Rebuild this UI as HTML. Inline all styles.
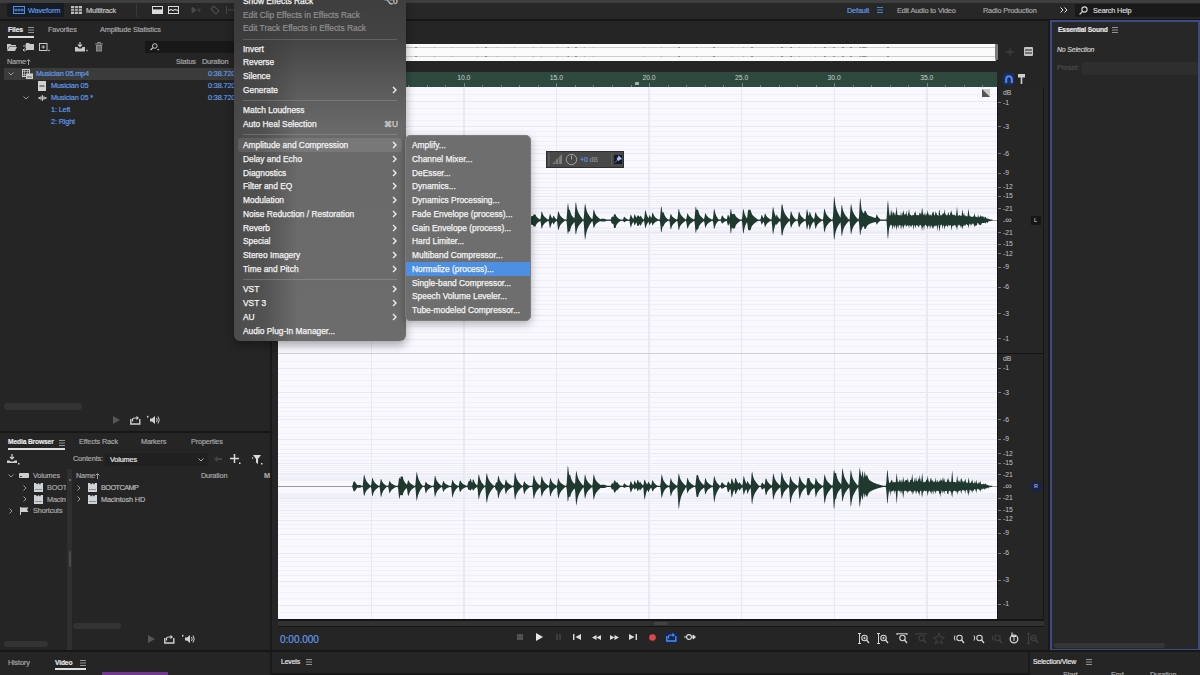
<!DOCTYPE html>
<html><head><meta charset="utf-8"><title>Adobe Audition</title>
<style>
*{box-sizing:border-box;margin:0;padding:0}
html,body{width:1200px;height:675px;overflow:hidden;background:#1a1a1a}
body{font-family:"Liberation Sans",sans-serif;font-size:7.3px;color:#a9a9a9;position:relative}
.a{position:absolute}
.t{position:absolute;white-space:nowrap;line-height:10px;height:10px;letter-spacing:-0.15px;-webkit-text-stroke-width:.18px}
.w{color:#e8e8e8}
.b{color:#629bea}
.d{color:#5a5a5a}
.panel{position:absolute;background:#252525}
svg{position:absolute;overflow:visible}
.mi{position:absolute;left:243px;white-space:nowrap;font-size:8.4px;line-height:12px;height:12px;color:#f4f4f4;-webkit-text-stroke:.25px #f4f4f4}
.mi.dis{color:#909090;-webkit-text-stroke:.2px #909090}
.sep{position:absolute;left:243px;width:154px;height:1px;background:rgba(255,255,255,.16)}
.si{position:absolute;left:412px;white-space:nowrap;font-size:8.4px;line-height:12px;height:12px;color:#f4f4f4;-webkit-text-stroke:.25px #f4f4f4}
.db{position:absolute;left:1003px;white-space:nowrap;font-size:6.8px;line-height:8px;height:8px;color:#c4c4c4}
.rl{position:absolute;white-space:nowrap;font-size:6.8px;line-height:8px;height:8px;color:#c9d2cd;width:30px;text-align:center;top:74.2px}
</style></head><body>

<!-- top app bar -->
<div class="a" style="left:0;top:0;width:1200px;height:20px;background:#272727"></div>
<div class="a" style="left:0;top:0;width:1200px;height:2.500px;background:#3e3e3e"></div>
<div class="a" style="left:0;top:19px;width:1200px;height:2px;background:#161616"></div>
<div class="panel" id="files" style="left:0;top:21px;width:270px;height:410px"></div>
<div class="panel" id="media" style="left:0;top:433px;width:270px;height:217px"></div>
<div class="panel" id="hist" style="left:0;top:652px;width:270px;height:23px"></div>
<div class="panel" id="editor" style="left:272px;top:21px;width:776px;height:629px"></div>
<div class="panel" id="levels" style="left:272px;top:652px;width:756px;height:23px"></div>
<div class="panel" id="ess" style="left:1050px;top:20px;width:150px;height:631px;border:2px solid #3f4a84;background:#272727"></div>
<div class="panel" id="selview" style="left:1030px;top:652px;width:170px;height:23px"></div>

<div class="a" style="left:7px;top:3px;width:57px;height:14px;background:#161b24;border-radius:2px"></div>
<svg style="left:13px;top:6px" width="12" height="8" viewBox="0 0 12 8"><rect x=".5" y=".5" width="11" height="7" fill="none" stroke="#4f8fe6"/><path d="M1 4h10M3 2.5v3M6 2.5v3M9 2.5v3" stroke="#4f8fe6" stroke-width="1"/></svg>
<div class="t b" style="left:28px;top:5.5px;font-size:7.4px">Waveform</div>
<svg style="left:71px;top:6px" width="11" height="8" viewBox="0 0 11 8"><rect x="0" y="0" width="11" height="8" fill="#bdbdbd"/><path d="M0 2.7h11M0 5.3h11M3.6 0v8M7.3 0v8" stroke="#222" stroke-width=".8"/></svg>
<div class="t" style="left:86px;top:5.5px;font-size:7.4px;color:#c6c6c6">Multitrack</div>
<div class="a" style="left:136px;top:4px;width:1px;height:13px;background:#3a3a3a"></div>
<svg style="left:152px;top:6px" width="11" height="8" viewBox="0 0 11 8"><rect width="11" height="8" fill="#dcdcdc"/><rect x="1" y="1" width="9" height="2.4" fill="#222"/></svg>
<svg style="left:168px;top:6px" width="11" height="8" viewBox="0 0 11 8"><rect x=".5" y=".5" width="10" height="7" fill="none" stroke="#dcdcdc"/><path d="M1 5l2-2 2 2 2-2 3 2" fill="none" stroke="#dcdcdc" stroke-width=".9"/><path d="M1 4h9" stroke="#dcdcdc" stroke-width=".6"/></svg>
<svg style="left:192px;top:6px" width="9" height="8" viewBox="0 0 9 8"><path d="M0 1l4 3-4 3zM5 4h4M7 2v4" fill="#4a4a4a" stroke="#4a4a4a" stroke-width=".8"/></svg>
<svg style="left:210px;top:5px" width="10" height="10" viewBox="0 0 10 10"><path d="M1 4l3-3 5 5-3 3z" fill="none" stroke="#4a4a4a" stroke-width="1.2"/></svg>
<svg style="left:226px;top:6px" width="8" height="8" viewBox="0 0 8 8"><path d="M.5 0v8M2 4h6" stroke="#4a4a4a" stroke-width="1"/></svg>

<div class="t b" style="left:847px;top:5.5px">Default</div>
<svg style="left:877px;top:7px" width="6" height="6" viewBox="0 0 6 6"><path d="M0 .5h6M0 3h6M0 5.5h6" stroke="#4f8fe6" stroke-width=".9"/></svg>
<div class="t" style="left:897px;top:5.5px">Edit Audio to Video</div>
<div class="t" style="left:983px;top:5.5px">Radio Production</div>
<svg style="left:1060px;top:7px" width="8" height="6" viewBox="0 0 8 6"><path d="M.5 .5l2.5 2.5-2.5 2.5M4.5 .5l2.500 2.500-2.500 2.500" fill="none" stroke="#e0e0e0" stroke-width="1"/></svg>
<div class="a" style="left:1075px;top:4px;width:125px;height:13px;background:#191919"></div>
<svg style="left:1079px;top:6px" width="9" height="9" viewBox="0 0 9 9"><circle cx="5.500" cy="3.500" r="2.600" fill="none" stroke="#d8d8d8" stroke-width="1.100"/><path d="M3.600 5.400L.6 8.400" stroke="#d8d8d8" stroke-width="1.300"/></svg>
<div class="t" style="left:1093px;top:6px;color:#dcdcdc">Search Help</div>

<div class="t w" style="left:8px;top:24.500px;font-weight:bold;font-size:6.9px">Files</div>
<svg style="left:28px;top:27px" width="6" height="6" viewBox="0 0 6 6"><path d="M0 .5h6M0 3h6M0 5.500h6" stroke="#a0a0a0" stroke-width=".9"/></svg>
<div class="a" style="left:8px;top:36px;width:26px;height:1.500px;background:#dedede"></div>
<div class="t" style="left:48px;top:24.500px">Favorites</div>
<div class="t" style="left:100px;top:24.500px">Amplitude Statistics</div>
<!-- toolbar icons -->
<svg style="left:7px;top:43px" width="10" height="8" viewBox="0 0 10 8"><path d="M0 1h3.500l1 1H9v1.500H2L0 7.500z" fill="#c8c8c8"/><path d="M2.300 4H10L8 8H0z" fill="#c8c8c8"/></svg>
<svg style="left:23px;top:42px" width="11" height="10" viewBox="0 0 11 10"><path d="M3 1h3l1 1h4v6H3z" fill="#c8c8c8"/><path d="M0 4h4M2.500 2.500L4 4 2.500 5.500M4 8H0M1.500 6.500L0 8l1.500 1.500" stroke="#c8c8c8" stroke-width=".9" fill="none"/></svg>
<svg style="left:39px;top:43px" width="11" height="9" viewBox="0 0 11 9"><rect x=".5" y=".5" width="7.500" height="7" fill="none" stroke="#c8c8c8" stroke-width="1"/><path d="M2.500 4h3.500M4.250 2.300v3.400" stroke="#c8c8c8" stroke-width=".9"/><rect x="9.300" y="6.800" width="1.400" height="1.400" fill="#c8c8c8"/></svg>
<svg style="left:75px;top:42px" width="13" height="10" viewBox="0 0 13 10"><path d="M0 5h2.500l1 1.500h3l1-1.500H10v4.500H0z" fill="#c8c8c8"/><path d="M5 0v4M3 2.500L5 4.600 7 2.500" stroke="#c8c8c8" stroke-width="1.200" fill="none"/><rect x="11.300" y="7.800" width="1.400" height="1.400" fill="#c8c8c8"/></svg>
<svg style="left:95px;top:42px" width="8" height="10" viewBox="0 0 8 10"><path d="M0 2h8M2.500 2V.5h3V2" stroke="#8a8a8a" stroke-width="1" fill="none"/><path d="M1 3h6v6.500H1z" fill="#8a8a8a"/><path d="M3 4v4.500M5 4v4.500" stroke="#232323" stroke-width=".6"/></svg>
<div class="a" style="left:145px;top:41px;width:89px;height:12px;background:#181818;border-radius:1px"></div>
<svg style="left:150px;top:43px" width="10" height="8" viewBox="0 0 10 8"><circle cx="4.800" cy="3" r="2.300" fill="none" stroke="#c8c8c8" stroke-width="1"/><path d="M3 4.600L.5 7" stroke="#c8c8c8" stroke-width="1.200"/><path d="M7 6h2.500L8.250 7.400z" fill="#c8c8c8"/></svg>
<!-- header -->
<div class="t" style="left:7px;top:57px">Name</div>
<svg style="left:26px;top:59px" width="5" height="6" viewBox="0 0 5 6"><path d="M2.500 6V1M.5 2.500L2.500 .5l2 2" stroke="#a9a9a9" stroke-width=".9" fill="none"/></svg>
<div class="t" style="left:176px;top:57px">Status</div>
<div class="t" style="left:202px;top:57px">Duration</div>
<!-- rows -->
<div class="a" style="left:4px;top:68px;width:230px;height:12px;background:#3b3b3b"></div>
<svg style="left:8px;top:72px" width="6" height="4" viewBox="0 0 6 4"><path d="M.5 .5L3 3 5.500 .5" stroke="#9a9a9a" stroke-width="1" fill="none"/></svg>
<svg style="left:22px;top:69px" width="11" height="10" viewBox="0 0 11 10"><rect x=".5" y=".5" width="7" height="7" fill="none" stroke="#cfcfcf" stroke-width="1"/><path d="M.5 2.500h7M.5 5.500h7M2.500 .5v7M5.500 .5v7" stroke="#cfcfcf" stroke-width=".6"/><rect x="4" y="4.500" width="7" height="5.500" fill="#cfcfcf"/><path d="M5 8h5" stroke="#3b3b3b" stroke-width=".7"/></svg>
<div class="t b" style="left:36px;top:69px">Musician 05.mp4</div>
<div class="t b" style="left:208px;top:69px">0:38.720</div>
<svg style="left:38px;top:81px" width="8" height="10" viewBox="0 0 8 10"><rect width="8" height="10" fill="#d2d2d2"/><path d="M1.500 5h5" stroke="#333" stroke-width="1"/></svg>
<div class="t b" style="left:51px;top:81px">Musician 05</div>
<div class="t b" style="left:208px;top:81px">0:38.720</div>
<svg style="left:23px;top:96px" width="6" height="4" viewBox="0 0 6 4"><path d="M.5 .5L3 3 5.500 .5" stroke="#9a9a9a" stroke-width="1" fill="none"/></svg>
<svg style="left:38px;top:95px" width="9" height="6" viewBox="0 0 9 6"><path d="M0 3h9M1.500 2v2M3 .8v4.400M4.500 0v6M6 1.200v3.600M7.500 2.200v1.600" stroke="#cfcfcf" stroke-width=".9"/></svg>
<div class="t b" style="left:51px;top:93px">Musician 05 *</div>
<div class="t b" style="left:208px;top:93px">0:38.720</div>
<div class="t b" style="left:51px;top:105px">1: Left</div>
<div class="t b" style="left:51px;top:117px">2: Right</div>
<!-- bottom scrollbar + transport -->
<div class="a" style="left:4px;top:403px;width:78px;height:7px;background:#333;border-radius:3px"></div>
<svg style="left:113px;top:416px" width="7" height="8" viewBox="0 0 7 8"><path d="M0 0l7 4-7 4z" fill="#555"/></svg>
<svg style="left:130px;top:415px" width="11" height="10" viewBox="0 0 11 10"><path d="M.8 4v5h9V4" stroke="#d0d0d0" stroke-width="1.400" fill="none"/><path d="M2.500 6.500V4.500Q2.500 3 4.500 3h3" stroke="#d0d0d0" stroke-width="1.200" fill="none"/><path d="M6.500 .8L9 3 6.500 5.200z" fill="#d0d0d0"/></svg>
<svg style="left:147px;top:415px" width="14" height="10" viewBox="0 0 14 10"><path d="M3 3.500h2L8 1v8L5 6.500H3z" fill="#d0d0d0"/><path d="M9.500 3q1.500 2 0 4M11 1.500q2.500 3.500 0 7" stroke="#d0d0d0" stroke-width="1" fill="none"/><path d="M0 .5l2 1.200-2 1.200z" fill="#d0d0d0"/></svg>

<div class="a" style="left:0;top:431px;width:270px;height:2px;background:#171717"></div>
<div class="t w" style="left:8px;top:437px;font-weight:bold;font-size:6.700px">Media Browser</div>
<svg style="left:59px;top:439.500px" width="6" height="6" viewBox="0 0 6 6"><path d="M0 .5h6M0 3h6M0 5.500h6" stroke="#a0a0a0" stroke-width=".9"/></svg>
<div class="a" style="left:8px;top:448px;width:57px;height:1.500px;background:#dedede"></div>
<div class="t" style="left:79px;top:437px">Effects Rack</div>
<div class="t" style="left:141px;top:437px">Markers</div>
<div class="t" style="left:191px;top:437px">Properties</div>
<svg style="left:7px;top:454px" width="13" height="11" viewBox="0 0 13 11"><path d="M5 0v4.500M3 3l2 2 2-2" stroke="#d0d0d0" stroke-width="1.200" fill="none"/><path d="M0 6.500h2.500l1 1h3l1-1H10V9H0z" fill="#d0d0d0"/><rect x="11" y="9" width="1.500" height="1.500" fill="#d0d0d0"/></svg>
<div class="t" style="left:73px;top:454px">Contents:</div>
<div class="a" style="left:105px;top:453px;width:103px;height:13px;background:#202020;border-radius:1px"></div>
<div class="t w" style="left:110px;top:454.500px">Volumes</div>
<svg style="left:198px;top:457.500px" width="6" height="4" viewBox="0 0 6 4"><path d="M.5 .5L3 3 5.500 .5" stroke="#b0b0b0" stroke-width="1" fill="none"/></svg>
<svg style="left:214px;top:456px" width="8" height="6" viewBox="0 0 8 6"><path d="M0 3l3.500-3v2H8v2H3.500v2z" fill="#444"/></svg>
<svg style="left:230px;top:454px" width="11" height="11" viewBox="0 0 11 11"><path d="M0 4.500h9M4.500 0v9" stroke="#dcdcdc" stroke-width="1.500"/><rect x="9" y="8.500" width="1.500" height="1.500" fill="#dcdcdc"/></svg>
<svg style="left:252px;top:455px" width="11" height="10" viewBox="0 0 11 10"><path d="M1 0h8L6 4v5L4 7.500V4z" fill="#dcdcdc"/><rect x="9" y="8" width="1.500" height="1.500" fill="#dcdcdc"/><path d="M0 2l1.500 1L0 4z" fill="#dcdcdc"/></svg>
<!-- tree -->
<svg style="left:8px;top:473.500px" width="6" height="4" viewBox="0 0 6 4"><path d="M.5 .5L3 3 5.500 .5" stroke="#9a9a9a" stroke-width="1" fill="none"/></svg>
<svg style="left:19px;top:473px" width="10" height="5" viewBox="0 0 10 5"><rect width="10" height="5" rx="1" fill="#cfcfcf"/><rect x="1" y="3" width="2" height="1" fill="#444"/></svg>
<div class="t" style="left:33px;top:471px">Volumes</div>
<svg style="left:23px;top:484.5px" width="4" height="6" viewBox="0 0 4 6"><path d="M.5 .5L3 3 .5 5.500" stroke="#9a9a9a" stroke-width="1" fill="none"/></svg><svg style="left:34px;top:483px" width="9" height="9" viewBox="0 0 9 9"><path d="M0 0h2l1 1.500L4.500 0 6 1.500 7 0h2v9H0z" fill="#cfd3d6"/><path d="M1 6.500h7" stroke="#8a9096" stroke-width="1"/></svg><div class="a" style="left:47px;top:483px;width:19px;height:10px;overflow:hidden"><div class="t" style="left:0;top:0">BOOTCAMP</div></div>
<svg style="left:23px;top:496px" width="4" height="6" viewBox="0 0 4 6"><path d="M.5 .5L3 3 .5 5.500" stroke="#9a9a9a" stroke-width="1" fill="none"/></svg><svg style="left:34px;top:494.5px" width="9" height="9" viewBox="0 0 9 9"><path d="M0 0h2l1 1.500L4.500 0 6 1.500 7 0h2v9H0z" fill="#cfd3d6"/><path d="M1 6.500h7" stroke="#8a9096" stroke-width="1"/></svg><div class="a" style="left:47px;top:494.500px;width:19px;height:10px;overflow:hidden"><div class="t" style="left:0;top:0">Macintosh HD</div></div>
<svg style="left:9px;top:508px" width="4" height="6" viewBox="0 0 4 6"><path d="M.5 .5L3 3 .5 5.500" stroke="#9a9a9a" stroke-width="1" fill="none"/></svg><svg style="left:20px;top:507px" width="9" height="8" viewBox="0 0 9 8"><path d="M.5 0v8" stroke="#cfcfcf" stroke-width="1"/><path d="M1 .5h7.500L7 2.800l1.500 2.300H1z" fill="#cfcfcf"/></svg><div class="t" style="left:33px;top:506px">Shortcuts</div>

<div class="a" style="left:67px;top:469px;width:5px;height:181px;background:#2f2f2f"></div>
<div class="a" style="left:68.500px;top:479px;width:2px;height:2px;background:#666"></div><div class="a" style="left:68.500px;top:551px;width:2px;height:16px;background:#4a4a4a;border-radius:1px"></div>
<div class="t" style="left:76px;top:470.500px">Name</div>
<svg style="left:95px;top:472.500px" width="5" height="6" viewBox="0 0 5 6"><path d="M2.500 6V1M.5 2.500L2.500 .5l2 2" stroke="#a9a9a9" stroke-width=".9" fill="none"/></svg>
<div class="t" style="left:201px;top:470.500px">Duration</div>
<div class="t" style="left:264px;top:470.500px;font-weight:bold">M</div>
<svg style="left:77px;top:484.5px" width="4" height="6" viewBox="0 0 4 6"><path d="M.5 .5L3 3 .5 5.500" stroke="#9a9a9a" stroke-width="1" fill="none"/></svg><svg style="left:88px;top:483px" width="9" height="9" viewBox="0 0 9 9"><path d="M0 0h2l1 1.500L4.500 0 6 1.500 7 0h2v9H0z" fill="#cfd3d6"/><path d="M1 6.500h7" stroke="#8a9096" stroke-width="1"/></svg><div class="t" style="left:101px;top:483px;color:#b9b9b9;letter-spacing:-.55px">BOOTCAMP</div>
<svg style="left:77px;top:496px" width="4" height="6" viewBox="0 0 4 6"><path d="M.5 .5L3 3 .5 5.500" stroke="#9a9a9a" stroke-width="1" fill="none"/></svg><svg style="left:88px;top:494.5px" width="9" height="9" viewBox="0 0 9 9"><path d="M0 0h2l1 1.500L4.500 0 6 1.500 7 0h2v9H0z" fill="#cfd3d6"/><path d="M1 6.500h7" stroke="#8a9096" stroke-width="1"/></svg><div class="t" style="left:101px;top:494.500px;color:#b9b9b9">Macintosh HD</div>

<div class="a" style="left:73px;top:623px;width:48px;height:6px;background:#333;border-radius:3px"></div>
<div class="a" style="left:4px;top:641px;width:44px;height:6px;background:#333;border-radius:3px"></div>
<svg style="left:148px;top:635px" width="7" height="8" viewBox="0 0 7 8"><path d="M0 0l7 4-7 4z" fill="#555"/></svg>
<svg style="left:164px;top:634px" width="11" height="10" viewBox="0 0 11 10"><path d="M.8 4v5h9V4" stroke="#d0d0d0" stroke-width="1.400" fill="none"/><path d="M2.500 6.500V4.500Q2.500 3 4.500 3h3" stroke="#d0d0d0" stroke-width="1.200" fill="none"/><path d="M6.500 .8L9 3 6.500 5.200z" fill="#d0d0d0"/></svg>
<svg style="left:182px;top:634px" width="14" height="10" viewBox="0 0 14 10"><path d="M3 3.500h2L8 1v8L5 6.500H3z" fill="#d0d0d0"/><path d="M9.500 3q1.500 2 0 4M11 1.500q2.500 3.500 0 7" stroke="#d0d0d0" stroke-width="1" fill="none"/><path d="M0 .5l2 1.200-2 1.200z" fill="#d0d0d0"/></svg>
<!-- history/video -->
<div class="a" style="left:0;top:650px;width:1200px;height:2px;background:#171717"></div>
<div class="t" style="left:8px;top:657.500px">History</div>
<div class="t w" style="left:55px;top:657.500px;font-weight:bold;font-size:6.700px">Video</div>
<svg style="left:80px;top:660px" width="6" height="6" viewBox="0 0 6 6"><path d="M0 .5h6M0 3h6M0 5.500h6" stroke="#a0a0a0" stroke-width=".9"/></svg>
<div class="a" style="left:55px;top:668px;width:31px;height:1.500px;background:#dedede"></div>
<div class="a" style="left:102px;top:672px;width:66px;height:3px;background:#70398f"></div>
<div class="t w" style="left:281px;top:656.500px;font-size:6.900px">Levels</div>
<svg style="left:306px;top:659px" width="6" height="6" viewBox="0 0 6 6"><path d="M0 .5h6M0 3h6M0 5.500h6" stroke="#a0a0a0" stroke-width=".9"/></svg>
<div class="a" style="left:272px;top:673px;width:756px;height:2px;background:#171717"></div>
<div class="t w" style="left:1033px;top:656.500px;font-size:6.900px">Selection/View</div>
<div class="t" style="left:1063px;top:669.500px">Start</div><div class="t" style="left:1111px;top:669.500px">End</div><div class="t" style="left:1150px;top:669.500px">Duration</div>
<svg style="left:1086px;top:659px" width="6" height="6" viewBox="0 0 6 6"><path d="M0 .5h6M0 3h6M0 5.500h6" stroke="#a0a0a0" stroke-width=".9"/></svg>

<div class="t w" style="left:1058px;top:24.500px;font-weight:bold;font-size:6.700px">Essential Sound</div>
<svg style="left:1112px;top:27px" width="6" height="6" viewBox="0 0 6 6"><path d="M0 .5h6M0 3h6M0 5.500h6" stroke="#a0a0a0" stroke-width=".9"/></svg>
<div class="t" style="left:1057px;top:44.500px;font-style:italic;color:#cfcfcf;font-size:6.900px">No Selection</div>
<div class="t d" style="left:1057px;top:63px;color:#4c4c4c">Preset:</div>
<div class="a" style="left:1082px;top:62px;width:116px;height:13px;background:#2e2e2e;border-radius:2px"></div>
<div class="a" style="left:1054px;top:642.500px;width:111px;height:5.500px;background:#363636;border-radius:3px"></div>

<div class="a" style="left:396px;top:43.500px;width:600px;height:17px;background:#fbfbfb;border-radius:1px"></div>
<div class="a" style="left:396px;top:47px;width:600px;height:1px;background:#cdcdcd"></div>
<div class="a" style="left:396px;top:56px;width:600px;height:1px;background:#cdcdcd"></div>
<div class="a" style="left:415.3px;top:47px;width:2px;height:1px;background:#8c8c8c"></div>
<div class="a" style="left:433.6px;top:47px;width:1px;height:1px;background:#a8a8a8"></div>
<div class="a" style="left:451.1px;top:47px;width:1px;height:1px;background:#a8a8a8"></div>
<div class="a" style="left:477.4px;top:47px;width:1px;height:1px;background:#a8a8a8"></div>
<div class="a" style="left:485.4px;top:47px;width:2px;height:1px;background:#8c8c8c"></div>
<div class="a" style="left:497.0px;top:47px;width:1px;height:1px;background:#a8a8a8"></div>
<div class="a" style="left:513.7px;top:47px;width:1px;height:1px;background:#a8a8a8"></div>
<div class="a" style="left:532.5px;top:47px;width:1px;height:1px;background:#a8a8a8"></div>
<div class="a" style="left:540.5px;top:47px;width:1px;height:1px;background:#a8a8a8"></div>
<div class="a" style="left:557.1px;top:47px;width:1px;height:1px;background:#a8a8a8"></div>
<div class="a" style="left:566.7px;top:47px;width:2px;height:1px;background:#8c8c8c"></div>
<div class="a" style="left:567.1px;top:47px;width:1px;height:1px;background:#a8a8a8"></div>
<div class="a" style="left:575.1px;top:47px;width:2px;height:1px;background:#8c8c8c"></div>
<div class="a" style="left:583.8px;top:47px;width:1px;height:1px;background:#a8a8a8"></div>
<div class="a" style="left:592.6px;top:47px;width:1px;height:1px;background:#a8a8a8"></div>
<div class="a" style="left:643.5px;top:47px;width:1px;height:1px;background:#a8a8a8"></div>
<div class="a" style="left:660.6px;top:47px;width:1px;height:1px;background:#a8a8a8"></div>
<div class="a" style="left:677.7px;top:47px;width:2px;height:1px;background:#8c8c8c"></div>
<div class="a" style="left:695.7px;top:47px;width:1px;height:1px;background:#a8a8a8"></div>
<div class="a" style="left:713.2px;top:47px;width:2px;height:1px;background:#8c8c8c"></div>
<div class="a" style="left:730.7px;top:47px;width:1px;height:1px;background:#a8a8a8"></div>
<div class="a" style="left:742.8px;top:47px;width:1px;height:1px;background:#a8a8a8"></div>
<div class="a" style="left:751.1px;top:47px;width:2px;height:1px;background:#8c8c8c"></div>
<div class="a" style="left:772.4px;top:47px;width:1px;height:1px;background:#a8a8a8"></div>
<div class="a" style="left:780.8px;top:47px;width:2px;height:1px;background:#8c8c8c"></div>
<div class="a" style="left:789.5px;top:47px;width:2px;height:1px;background:#8c8c8c"></div>
<div class="a" style="left:798.7px;top:47px;width:1px;height:1px;background:#a8a8a8"></div>
<div class="a" style="left:814.9px;top:47px;width:1px;height:1px;background:#a8a8a8"></div>
<div class="a" style="left:823.8px;top:47px;width:2px;height:1px;background:#8c8c8c"></div>
<div class="a" style="left:833.2px;top:47px;width:2px;height:1px;background:#8c8c8c"></div>
<div class="a" style="left:833.5px;top:47px;width:1px;height:1px;background:#a8a8a8"></div>
<div class="a" style="left:841.7px;top:47px;width:2px;height:1px;background:#8c8c8c"></div>
<div class="a" style="left:850.0px;top:47px;width:2px;height:1px;background:#8c8c8c"></div>
<div class="a" style="left:858.9px;top:47px;width:2px;height:1px;background:#8c8c8c"></div>
<div class="a" style="left:859.1px;top:47px;width:1px;height:1px;background:#a8a8a8"></div>
<div class="a" style="left:861.7px;top:47px;width:2px;height:1px;background:#8c8c8c"></div>
<div class="a" style="left:863.9px;top:47px;width:2px;height:1px;background:#8c8c8c"></div>
<div class="a" style="left:865.7px;top:47px;width:1px;height:1px;background:#a8a8a8"></div>
<div class="a" style="left:886.6px;top:47px;width:2px;height:1px;background:#8c8c8c"></div>
<div class="a" style="left:415.3px;top:56px;width:2px;height:1px;background:#8c8c8c"></div>
<div class="a" style="left:433.6px;top:56px;width:1px;height:1px;background:#a8a8a8"></div>
<div class="a" style="left:451.1px;top:56px;width:1px;height:1px;background:#a8a8a8"></div>
<div class="a" style="left:477.4px;top:56px;width:1px;height:1px;background:#a8a8a8"></div>
<div class="a" style="left:485.4px;top:56px;width:2px;height:1px;background:#8c8c8c"></div>
<div class="a" style="left:497.0px;top:56px;width:1px;height:1px;background:#a8a8a8"></div>
<div class="a" style="left:513.7px;top:56px;width:1px;height:1px;background:#a8a8a8"></div>
<div class="a" style="left:532.5px;top:56px;width:1px;height:1px;background:#a8a8a8"></div>
<div class="a" style="left:540.5px;top:56px;width:1px;height:1px;background:#a8a8a8"></div>
<div class="a" style="left:557.1px;top:56px;width:1px;height:1px;background:#a8a8a8"></div>
<div class="a" style="left:566.7px;top:56px;width:2px;height:1px;background:#8c8c8c"></div>
<div class="a" style="left:567.1px;top:56px;width:1px;height:1px;background:#a8a8a8"></div>
<div class="a" style="left:575.1px;top:56px;width:2px;height:1px;background:#8c8c8c"></div>
<div class="a" style="left:583.8px;top:56px;width:1px;height:1px;background:#a8a8a8"></div>
<div class="a" style="left:592.6px;top:56px;width:1px;height:1px;background:#a8a8a8"></div>
<div class="a" style="left:643.5px;top:56px;width:1px;height:1px;background:#a8a8a8"></div>
<div class="a" style="left:660.6px;top:56px;width:1px;height:1px;background:#a8a8a8"></div>
<div class="a" style="left:677.7px;top:56px;width:2px;height:1px;background:#8c8c8c"></div>
<div class="a" style="left:695.7px;top:56px;width:1px;height:1px;background:#a8a8a8"></div>
<div class="a" style="left:713.2px;top:56px;width:2px;height:1px;background:#8c8c8c"></div>
<div class="a" style="left:730.7px;top:56px;width:1px;height:1px;background:#a8a8a8"></div>
<div class="a" style="left:742.8px;top:56px;width:1px;height:1px;background:#a8a8a8"></div>
<div class="a" style="left:751.1px;top:56px;width:2px;height:1px;background:#8c8c8c"></div>
<div class="a" style="left:772.4px;top:56px;width:1px;height:1px;background:#a8a8a8"></div>
<div class="a" style="left:780.8px;top:56px;width:2px;height:1px;background:#8c8c8c"></div>
<div class="a" style="left:789.5px;top:56px;width:2px;height:1px;background:#8c8c8c"></div>
<div class="a" style="left:798.7px;top:56px;width:1px;height:1px;background:#a8a8a8"></div>
<div class="a" style="left:814.9px;top:56px;width:1px;height:1px;background:#a8a8a8"></div>
<div class="a" style="left:823.8px;top:56px;width:2px;height:1px;background:#8c8c8c"></div>
<div class="a" style="left:833.2px;top:56px;width:2px;height:1px;background:#8c8c8c"></div>
<div class="a" style="left:833.5px;top:56px;width:1px;height:1px;background:#a8a8a8"></div>
<div class="a" style="left:841.7px;top:56px;width:2px;height:1px;background:#8c8c8c"></div>
<div class="a" style="left:850.0px;top:56px;width:2px;height:1px;background:#8c8c8c"></div>
<div class="a" style="left:858.9px;top:56px;width:2px;height:1px;background:#8c8c8c"></div>
<div class="a" style="left:859.1px;top:56px;width:1px;height:1px;background:#a8a8a8"></div>
<div class="a" style="left:861.7px;top:56px;width:2px;height:1px;background:#8c8c8c"></div>
<div class="a" style="left:863.9px;top:56px;width:2px;height:1px;background:#8c8c8c"></div>
<div class="a" style="left:865.7px;top:56px;width:1px;height:1px;background:#a8a8a8"></div>
<div class="a" style="left:886.6px;top:56px;width:2px;height:1px;background:#8c8c8c"></div>
<div class="a" style="left:995px;top:44px;width:3px;height:16px;background:#7a7a7a;border-radius:1px"></div>
<svg style="left:1004px;top:46px" width="12" height="12" viewBox="0 0 12 12"><path d="M6 0l1 4.500L11.500 6 7 7.200 6 12 5 7.200.5 6 5 4.500z" fill="#3a3a3a"/></svg>
<svg style="left:1024px;top:47px" width="9" height="9" viewBox="0 0 9 9"><rect width="9" height="9" rx="1" fill="#c4c4c4"/><path d="M1 3h7M1 6h7" stroke="#232323" stroke-width="1"/></svg>
<!-- ruler -->
<div class="a" style="left:278px;top:72px;width:719px;height:15px;background:#2e4a3e"></div>
<div class="a" style="left:278.6px;top:83.0px;width:1px;height:4.0px;background:#6f8a7d"></div>
<div class="a" style="left:297.1px;top:84.5px;width:1px;height:2.5px;background:#6f8a7d"></div>
<div class="a" style="left:315.6px;top:84.5px;width:1px;height:2.5px;background:#6f8a7d"></div>
<div class="a" style="left:334.2px;top:84.5px;width:1px;height:2.5px;background:#6f8a7d"></div>
<div class="a" style="left:352.7px;top:84.5px;width:1px;height:2.5px;background:#6f8a7d"></div>
<div class="a" style="left:371.2px;top:83.0px;width:1px;height:4.0px;background:#6f8a7d"></div>
<div class="a" style="left:389.7px;top:84.5px;width:1px;height:2.5px;background:#6f8a7d"></div>
<div class="a" style="left:408.2px;top:84.5px;width:1px;height:2.5px;background:#6f8a7d"></div>
<div class="a" style="left:426.8px;top:84.5px;width:1px;height:2.5px;background:#6f8a7d"></div>
<div class="a" style="left:445.3px;top:84.5px;width:1px;height:2.5px;background:#6f8a7d"></div>
<div class="a" style="left:463.8px;top:83.0px;width:1px;height:4.0px;background:#6f8a7d"></div>
<div class="a" style="left:482.3px;top:84.5px;width:1px;height:2.5px;background:#6f8a7d"></div>
<div class="a" style="left:500.8px;top:84.5px;width:1px;height:2.5px;background:#6f8a7d"></div>
<div class="a" style="left:519.4px;top:84.5px;width:1px;height:2.5px;background:#6f8a7d"></div>
<div class="a" style="left:537.9px;top:84.5px;width:1px;height:2.5px;background:#6f8a7d"></div>
<div class="a" style="left:556.4px;top:83.0px;width:1px;height:4.0px;background:#6f8a7d"></div>
<div class="a" style="left:574.9px;top:84.5px;width:1px;height:2.5px;background:#6f8a7d"></div>
<div class="a" style="left:593.4px;top:84.5px;width:1px;height:2.5px;background:#6f8a7d"></div>
<div class="a" style="left:612.0px;top:84.5px;width:1px;height:2.5px;background:#6f8a7d"></div>
<div class="a" style="left:630.5px;top:84.5px;width:1px;height:2.5px;background:#6f8a7d"></div>
<div class="a" style="left:649.0px;top:83.0px;width:1px;height:4.0px;background:#6f8a7d"></div>
<div class="a" style="left:667.5px;top:84.5px;width:1px;height:2.5px;background:#6f8a7d"></div>
<div class="a" style="left:686.0px;top:84.5px;width:1px;height:2.5px;background:#6f8a7d"></div>
<div class="a" style="left:704.6px;top:84.5px;width:1px;height:2.5px;background:#6f8a7d"></div>
<div class="a" style="left:723.1px;top:84.5px;width:1px;height:2.5px;background:#6f8a7d"></div>
<div class="a" style="left:741.6px;top:83.0px;width:1px;height:4.0px;background:#6f8a7d"></div>
<div class="a" style="left:760.1px;top:84.5px;width:1px;height:2.5px;background:#6f8a7d"></div>
<div class="a" style="left:778.6px;top:84.5px;width:1px;height:2.5px;background:#6f8a7d"></div>
<div class="a" style="left:797.2px;top:84.5px;width:1px;height:2.5px;background:#6f8a7d"></div>
<div class="a" style="left:815.7px;top:84.5px;width:1px;height:2.5px;background:#6f8a7d"></div>
<div class="a" style="left:834.2px;top:83.0px;width:1px;height:4.0px;background:#6f8a7d"></div>
<div class="a" style="left:852.7px;top:84.5px;width:1px;height:2.5px;background:#6f8a7d"></div>
<div class="a" style="left:871.2px;top:84.5px;width:1px;height:2.5px;background:#6f8a7d"></div>
<div class="a" style="left:889.8px;top:84.5px;width:1px;height:2.5px;background:#6f8a7d"></div>
<div class="a" style="left:908.3px;top:84.5px;width:1px;height:2.5px;background:#6f8a7d"></div>
<div class="a" style="left:926.8px;top:83.0px;width:1px;height:4.0px;background:#6f8a7d"></div>
<div class="a" style="left:945.3px;top:84.5px;width:1px;height:2.5px;background:#6f8a7d"></div>
<div class="a" style="left:963.8px;top:84.5px;width:1px;height:2.5px;background:#6f8a7d"></div>
<div class="a" style="left:982.4px;top:84.5px;width:1px;height:2.5px;background:#6f8a7d"></div>
<div class="rl" style="left:356.2px">5.0</div><div class="rl" style="left:448.8px">10.0</div><div class="rl" style="left:541.4px">15.0</div><div class="rl" style="left:634.0px">20.0</div><div class="rl" style="left:726.6px">25.0</div><div class="rl" style="left:819.2px">30.0</div><div class="rl" style="left:911.8px">35.0</div>

<div class="a" style="left:1003px;top:73px;width:11px;height:12px;background:#1c2c5e;border-radius:2px"></div>
<svg style="left:1004.500px;top:75px" width="8" height="8" viewBox="0 0 8 8"><path d="M1.200 8V4a2.800 2.800 0 0 1 5.600 0v4" fill="none" stroke="#4d8df0" stroke-width="2"/></svg>
<svg style="left:1018px;top:74px" width="7" height="10" viewBox="0 0 7 10"><path d="M0 0h7v3.500H0z" fill="#d0d0d0"/><path d="M3.500 3v7" stroke="#d0d0d0" stroke-width="1.600"/></svg>
<div class="a" style="left:635px;top:82px;width:4px;height:3px;background:#9fb0a8"></div>
<!-- wave area -->
<div class="a" id="wave" style="left:278px;top:87px;width:719px;height:533px;background:#f8f8fe"></div>
<div class="a" style="left:278px;top:94.0px;width:719px;height:1px;background:#f0f0f9"></div>
<div class="a" style="left:278px;top:346.0px;width:719px;height:1px;background:#f0f0f9"></div>
<div class="a" style="left:278px;top:101.0px;width:719px;height:1px;background:#e9e9f4"></div>
<div class="a" style="left:278px;top:339.0px;width:719px;height:1px;background:#e9e9f4"></div>
<div class="a" style="left:278px;top:107.7px;width:719px;height:1px;background:#f0f0f9"></div>
<div class="a" style="left:278px;top:332.3px;width:719px;height:1px;background:#f0f0f9"></div>
<div class="a" style="left:278px;top:114.0px;width:719px;height:1px;background:#f0f0f9"></div>
<div class="a" style="left:278px;top:326.0px;width:719px;height:1px;background:#f0f0f9"></div>
<div class="a" style="left:278px;top:119.9px;width:719px;height:1px;background:#f0f0f9"></div>
<div class="a" style="left:278px;top:320.1px;width:719px;height:1px;background:#f0f0f9"></div>
<div class="a" style="left:278px;top:125.5px;width:719px;height:1px;background:#e9e9f4"></div>
<div class="a" style="left:278px;top:314.5px;width:719px;height:1px;background:#e9e9f4"></div>
<div class="a" style="left:278px;top:130.8px;width:719px;height:1px;background:#f0f0f9"></div>
<div class="a" style="left:278px;top:309.2px;width:719px;height:1px;background:#f0f0f9"></div>
<div class="a" style="left:278px;top:135.8px;width:719px;height:1px;background:#f0f0f9"></div>
<div class="a" style="left:278px;top:304.2px;width:719px;height:1px;background:#f0f0f9"></div>
<div class="a" style="left:278px;top:140.5px;width:719px;height:1px;background:#f0f0f9"></div>
<div class="a" style="left:278px;top:299.5px;width:719px;height:1px;background:#f0f0f9"></div>
<div class="a" style="left:278px;top:144.9px;width:719px;height:1px;background:#f0f0f9"></div>
<div class="a" style="left:278px;top:295.1px;width:719px;height:1px;background:#f0f0f9"></div>
<div class="a" style="left:278px;top:149.1px;width:719px;height:1px;background:#f0f0f9"></div>
<div class="a" style="left:278px;top:290.9px;width:719px;height:1px;background:#f0f0f9"></div>
<div class="a" style="left:278px;top:153.1px;width:719px;height:1px;background:#e9e9f4"></div>
<div class="a" style="left:278px;top:286.9px;width:719px;height:1px;background:#e9e9f4"></div>
<div class="a" style="left:278px;top:160.4px;width:719px;height:1px;background:#f0f0f9"></div>
<div class="a" style="left:278px;top:279.6px;width:719px;height:1px;background:#f0f0f9"></div>
<div class="a" style="left:278px;top:166.9px;width:719px;height:1px;background:#f0f0f9"></div>
<div class="a" style="left:278px;top:273.1px;width:719px;height:1px;background:#f0f0f9"></div>
<div class="a" style="left:278px;top:172.6px;width:719px;height:1px;background:#e9e9f4"></div>
<div class="a" style="left:278px;top:267.4px;width:719px;height:1px;background:#e9e9f4"></div>
<div class="a" style="left:278px;top:177.8px;width:719px;height:1px;background:#f0f0f9"></div>
<div class="a" style="left:278px;top:262.2px;width:719px;height:1px;background:#f0f0f9"></div>
<div class="a" style="left:278px;top:182.4px;width:719px;height:1px;background:#f0f0f9"></div>
<div class="a" style="left:278px;top:257.6px;width:719px;height:1px;background:#f0f0f9"></div>
<div class="a" style="left:278px;top:186.5px;width:719px;height:1px;background:#e9e9f4"></div>
<div class="a" style="left:278px;top:253.5px;width:719px;height:1px;background:#e9e9f4"></div>
<div class="a" style="left:278px;top:190.1px;width:719px;height:1px;background:#f0f0f9"></div>
<div class="a" style="left:278px;top:249.9px;width:719px;height:1px;background:#f0f0f9"></div>
<div class="a" style="left:278px;top:193.4px;width:719px;height:1px;background:#f0f0f9"></div>
<div class="a" style="left:278px;top:246.6px;width:719px;height:1px;background:#f0f0f9"></div>
<div class="a" style="left:278px;top:196.3px;width:719px;height:1px;background:#e9e9f4"></div>
<div class="a" style="left:278px;top:243.7px;width:719px;height:1px;background:#e9e9f4"></div>
<div class="a" style="left:278px;top:198.8px;width:719px;height:1px;background:#f0f0f9"></div>
<div class="a" style="left:278px;top:241.2px;width:719px;height:1px;background:#f0f0f9"></div>
<div class="a" style="left:278px;top:201.1px;width:719px;height:1px;background:#f0f0f9"></div>
<div class="a" style="left:278px;top:238.9px;width:719px;height:1px;background:#f0f0f9"></div>
<div class="a" style="left:278px;top:203.2px;width:719px;height:1px;background:#f0f0f9"></div>
<div class="a" style="left:278px;top:236.8px;width:719px;height:1px;background:#f0f0f9"></div>
<div class="a" style="left:278px;top:205.0px;width:719px;height:1px;background:#f0f0f9"></div>
<div class="a" style="left:278px;top:235.0px;width:719px;height:1px;background:#f0f0f9"></div>
<div class="a" style="left:278px;top:206.7px;width:719px;height:1px;background:#f0f0f9"></div>
<div class="a" style="left:278px;top:233.3px;width:719px;height:1px;background:#f0f0f9"></div>
<div class="a" style="left:278px;top:208.1px;width:719px;height:1px;background:#e9e9f4"></div>
<div class="a" style="left:278px;top:231.9px;width:719px;height:1px;background:#e9e9f4"></div>
<div class="a" style="left:278px;top:209.4px;width:719px;height:1px;background:#f0f0f9"></div>
<div class="a" style="left:278px;top:230.6px;width:719px;height:1px;background:#f0f0f9"></div>
<div class="a" style="left:278px;top:210.5px;width:719px;height:1px;background:#f0f0f9"></div>
<div class="a" style="left:278px;top:229.5px;width:719px;height:1px;background:#f0f0f9"></div>
<div class="a" style="left:278px;top:211.6px;width:719px;height:1px;background:#f0f0f9"></div>
<div class="a" style="left:278px;top:228.4px;width:719px;height:1px;background:#f0f0f9"></div>
<div class="a" style="left:278px;top:212.5px;width:719px;height:1px;background:#f0f0f9"></div>
<div class="a" style="left:278px;top:227.5px;width:719px;height:1px;background:#f0f0f9"></div>
<div class="a" style="left:278px;top:213.3px;width:719px;height:1px;background:#f0f0f9"></div>
<div class="a" style="left:278px;top:226.7px;width:719px;height:1px;background:#f0f0f9"></div>
<div class="a" style="left:278px;top:360.5px;width:719px;height:1px;background:#f0f0f9"></div>
<div class="a" style="left:278px;top:611.9px;width:719px;height:1px;background:#f0f0f9"></div>
<div class="a" style="left:278px;top:367.5px;width:719px;height:1px;background:#e9e9f4"></div>
<div class="a" style="left:278px;top:604.9px;width:719px;height:1px;background:#e9e9f4"></div>
<div class="a" style="left:278px;top:374.1px;width:719px;height:1px;background:#f0f0f9"></div>
<div class="a" style="left:278px;top:598.3px;width:719px;height:1px;background:#f0f0f9"></div>
<div class="a" style="left:278px;top:380.4px;width:719px;height:1px;background:#f0f0f9"></div>
<div class="a" style="left:278px;top:592.0px;width:719px;height:1px;background:#f0f0f9"></div>
<div class="a" style="left:278px;top:386.3px;width:719px;height:1px;background:#f0f0f9"></div>
<div class="a" style="left:278px;top:586.1px;width:719px;height:1px;background:#f0f0f9"></div>
<div class="a" style="left:278px;top:391.9px;width:719px;height:1px;background:#e9e9f4"></div>
<div class="a" style="left:278px;top:580.5px;width:719px;height:1px;background:#e9e9f4"></div>
<div class="a" style="left:278px;top:397.2px;width:719px;height:1px;background:#f0f0f9"></div>
<div class="a" style="left:278px;top:575.2px;width:719px;height:1px;background:#f0f0f9"></div>
<div class="a" style="left:278px;top:402.2px;width:719px;height:1px;background:#f0f0f9"></div>
<div class="a" style="left:278px;top:570.2px;width:719px;height:1px;background:#f0f0f9"></div>
<div class="a" style="left:278px;top:406.9px;width:719px;height:1px;background:#f0f0f9"></div>
<div class="a" style="left:278px;top:565.5px;width:719px;height:1px;background:#f0f0f9"></div>
<div class="a" style="left:278px;top:411.3px;width:719px;height:1px;background:#f0f0f9"></div>
<div class="a" style="left:278px;top:561.1px;width:719px;height:1px;background:#f0f0f9"></div>
<div class="a" style="left:278px;top:415.5px;width:719px;height:1px;background:#f0f0f9"></div>
<div class="a" style="left:278px;top:556.9px;width:719px;height:1px;background:#f0f0f9"></div>
<div class="a" style="left:278px;top:419.4px;width:719px;height:1px;background:#e9e9f4"></div>
<div class="a" style="left:278px;top:553.0px;width:719px;height:1px;background:#e9e9f4"></div>
<div class="a" style="left:278px;top:426.7px;width:719px;height:1px;background:#f0f0f9"></div>
<div class="a" style="left:278px;top:545.7px;width:719px;height:1px;background:#f0f0f9"></div>
<div class="a" style="left:278px;top:433.2px;width:719px;height:1px;background:#f0f0f9"></div>
<div class="a" style="left:278px;top:539.2px;width:719px;height:1px;background:#f0f0f9"></div>
<div class="a" style="left:278px;top:438.9px;width:719px;height:1px;background:#e9e9f4"></div>
<div class="a" style="left:278px;top:533.5px;width:719px;height:1px;background:#e9e9f4"></div>
<div class="a" style="left:278px;top:444.1px;width:719px;height:1px;background:#f0f0f9"></div>
<div class="a" style="left:278px;top:528.3px;width:719px;height:1px;background:#f0f0f9"></div>
<div class="a" style="left:278px;top:448.7px;width:719px;height:1px;background:#f0f0f9"></div>
<div class="a" style="left:278px;top:523.7px;width:719px;height:1px;background:#f0f0f9"></div>
<div class="a" style="left:278px;top:452.7px;width:719px;height:1px;background:#e9e9f4"></div>
<div class="a" style="left:278px;top:519.7px;width:719px;height:1px;background:#e9e9f4"></div>
<div class="a" style="left:278px;top:456.4px;width:719px;height:1px;background:#f0f0f9"></div>
<div class="a" style="left:278px;top:516.0px;width:719px;height:1px;background:#f0f0f9"></div>
<div class="a" style="left:278px;top:459.6px;width:719px;height:1px;background:#f0f0f9"></div>
<div class="a" style="left:278px;top:512.8px;width:719px;height:1px;background:#f0f0f9"></div>
<div class="a" style="left:278px;top:462.5px;width:719px;height:1px;background:#e9e9f4"></div>
<div class="a" style="left:278px;top:509.9px;width:719px;height:1px;background:#e9e9f4"></div>
<div class="a" style="left:278px;top:465.1px;width:719px;height:1px;background:#f0f0f9"></div>
<div class="a" style="left:278px;top:507.3px;width:719px;height:1px;background:#f0f0f9"></div>
<div class="a" style="left:278px;top:467.4px;width:719px;height:1px;background:#f0f0f9"></div>
<div class="a" style="left:278px;top:505.0px;width:719px;height:1px;background:#f0f0f9"></div>
<div class="a" style="left:278px;top:469.4px;width:719px;height:1px;background:#f0f0f9"></div>
<div class="a" style="left:278px;top:503.0px;width:719px;height:1px;background:#f0f0f9"></div>
<div class="a" style="left:278px;top:471.3px;width:719px;height:1px;background:#f0f0f9"></div>
<div class="a" style="left:278px;top:501.1px;width:719px;height:1px;background:#f0f0f9"></div>
<div class="a" style="left:278px;top:472.9px;width:719px;height:1px;background:#f0f0f9"></div>
<div class="a" style="left:278px;top:499.5px;width:719px;height:1px;background:#f0f0f9"></div>
<div class="a" style="left:278px;top:474.3px;width:719px;height:1px;background:#e9e9f4"></div>
<div class="a" style="left:278px;top:498.1px;width:719px;height:1px;background:#e9e9f4"></div>
<div class="a" style="left:278px;top:475.6px;width:719px;height:1px;background:#f0f0f9"></div>
<div class="a" style="left:278px;top:496.8px;width:719px;height:1px;background:#f0f0f9"></div>
<div class="a" style="left:278px;top:476.8px;width:719px;height:1px;background:#f0f0f9"></div>
<div class="a" style="left:278px;top:495.6px;width:719px;height:1px;background:#f0f0f9"></div>
<div class="a" style="left:278px;top:477.8px;width:719px;height:1px;background:#f0f0f9"></div>
<div class="a" style="left:278px;top:494.6px;width:719px;height:1px;background:#f0f0f9"></div>
<div class="a" style="left:278px;top:478.7px;width:719px;height:1px;background:#f0f0f9"></div>
<div class="a" style="left:278px;top:493.7px;width:719px;height:1px;background:#f0f0f9"></div>
<div class="a" style="left:278px;top:479.5px;width:719px;height:1px;background:#f0f0f9"></div>
<div class="a" style="left:278px;top:492.9px;width:719px;height:1px;background:#f0f0f9"></div>
<div class="a" style="left:370.5px;top:87px;width:1.500px;height:533px;background:#e9e9f3"></div>
<div class="a" style="left:463.1px;top:87px;width:1.500px;height:533px;background:#e9e9f3"></div>
<div class="a" style="left:555.7px;top:87px;width:1.500px;height:533px;background:#e9e9f3"></div>
<div class="a" style="left:648.2px;top:87px;width:1.500px;height:533px;background:#e9e9f3"></div>
<div class="a" style="left:740.9px;top:87px;width:1.500px;height:533px;background:#e9e9f3"></div>
<div class="a" style="left:833.5px;top:87px;width:1.500px;height:533px;background:#e9e9f3"></div>
<div class="a" style="left:926.0px;top:87px;width:1.500px;height:533px;background:#e9e9f3"></div>
<div class="a" style="left:278px;top:219.700px;width:719px;height:1px;background:#9c9c9c"></div>
<div class="a" style="left:278px;top:485.900px;width:719px;height:1px;background:#9c9c9c"></div>
<svg style="left:0;top:0" width="1200" height="675" viewBox="0 0 1200 675"><polygon fill="#20392f" points="520.0,219.6 520.5,219.6 521.0,219.6 521.5,219.6 522.0,219.6 522.5,219.6 523.0,219.3 523.5,217.3 524.0,215.0 524.5,215.0 525.0,216.1 525.5,216.9 526.0,217.4 526.5,217.9 527.0,218.2 527.5,218.5 528.0,218.8 528.5,219.1 529.0,219.3 529.5,219.5 530.0,219.6 530.5,218.9 531.0,217.2 531.5,216.0 532.0,216.0 532.5,216.0 533.0,216.1 533.5,214.6 534.0,214.6 534.5,214.6 535.0,214.6 535.5,214.6 536.0,215.8 536.5,216.7 537.0,217.3 537.5,217.8 538.0,218.2 538.5,218.5 539.0,218.8 539.5,219.1 540.0,219.4 540.5,218.7 541.0,215.4 541.5,211.6 542.0,211.6 542.5,213.4 543.0,214.6 543.5,215.5 544.0,216.2 544.5,216.8 545.0,217.3 545.5,217.7 546.0,218.1 546.5,218.5 547.0,218.8 547.5,219.2 548.0,219.5 548.5,219.6 549.0,218.1 549.5,215.5 550.0,213.7 550.5,214.8 551.0,216.1 551.5,217.2 552.0,218.0 552.5,218.6 553.0,216.8 553.5,215.5 554.0,216.1 554.5,217.1 555.0,217.9 555.5,218.5 556.0,219.0 556.5,219.4 557.0,219.2 557.5,215.9 558.0,211.9 558.5,211.1 559.0,212.7 559.5,214.1 560.0,215.1 560.5,215.9 561.0,216.5 561.5,217.0 562.0,217.5 562.5,217.9 563.0,218.3 563.5,218.7 564.0,219.0 564.5,219.4 565.0,219.6 565.5,219.6 566.0,219.6 566.5,219.4 567.0,213.3 567.5,206.0 568.0,202.8 568.5,206.5 569.0,209.8 569.5,209.8 570.0,210.3 570.5,212.4 571.0,213.8 571.5,214.9 572.0,215.7 572.5,216.4 573.0,217.0 573.5,217.5 574.0,218.0 574.5,218.3 575.0,211.5 575.5,203.7 576.0,202.0 576.5,205.8 577.0,208.4 577.5,210.2 578.0,211.6 578.5,212.7 579.0,213.7 579.5,214.6 580.0,215.4 580.5,216.1 581.0,216.9 581.5,217.5 582.0,218.2 582.5,218.8 583.0,219.4 583.5,219.6 584.0,214.9 584.5,208.1 585.0,203.6 585.5,205.1 586.0,208.1 586.5,210.1 587.0,211.6 587.5,212.7 588.0,213.7 588.5,214.6 589.0,215.3 589.5,216.1 590.0,216.8 590.5,217.4 591.0,218.0 591.5,218.6 592.0,219.1 592.5,218.7 593.0,214.6 593.5,209.9 594.0,209.4 594.5,211.5 595.0,213.0 595.5,214.2 596.0,215.0 596.5,215.7 597.0,216.3 597.5,216.8 598.0,217.3 598.5,217.7 599.0,218.2 599.5,218.6 600.0,219.0 600.5,219.2 601.0,218.8 601.5,218.8 602.0,218.8 602.5,218.8 603.0,218.8 603.5,218.8 604.0,218.8 604.5,218.8 605.0,219.0 605.5,219.2 606.0,219.4 606.5,219.5 607.0,219.6 607.5,219.6 608.0,219.6 608.5,219.6 609.0,219.6 609.5,219.6 610.0,219.6 610.5,219.6 611.0,219.0 611.5,217.5 612.0,216.6 612.5,216.6 613.0,217.0 613.5,216.8 614.0,214.2 614.5,214.2 615.0,214.2 615.5,214.2 616.0,215.5 616.5,216.4 617.0,217.1 617.5,217.6 618.0,218.0 618.5,218.4 619.0,218.7 619.5,219.0 620.0,219.3 620.5,219.6 621.0,219.6 621.5,219.6 622.0,219.6 622.5,219.6 623.0,219.6 623.5,218.3 624.0,216.8 624.5,216.8 625.0,217.5 625.5,218.1 626.0,218.5 626.5,218.8 627.0,219.0 627.5,219.3 628.0,219.5 628.5,219.6 629.0,219.6 629.5,219.6 630.0,217.5 630.5,215.1 631.0,214.6 631.5,216.0 632.0,217.1 632.5,217.9 633.0,218.5 633.5,218.7 634.0,216.3 634.5,214.2 635.0,214.5 635.5,216.0 636.0,217.0 636.5,217.8 637.0,216.8 637.5,215.5 638.0,215.5 638.5,215.5 639.0,216.1 639.5,217.1 640.0,216.8 640.5,215.5 641.0,216.1 641.5,217.1 642.0,217.9 642.5,218.5 643.0,219.0 643.5,219.4 644.0,219.6 644.5,216.1 645.0,211.7 645.5,209.8 646.0,211.9 646.5,213.9 647.0,215.3 647.5,216.5 648.0,217.4 648.5,218.3 649.0,216.9 649.5,215.0 650.0,215.6 650.5,216.8 651.0,217.6 651.5,217.7 652.0,214.5 652.5,212.4 653.0,213.2 653.5,214.6 654.0,215.6 654.5,216.3 655.0,216.9 655.5,217.4 656.0,217.9 656.5,218.3 657.0,218.6 657.5,219.0 658.0,219.3 658.5,219.6 659.0,219.6 659.5,219.6 660.0,218.3 660.5,213.1 661.0,207.0 661.5,206.8 662.0,210.2 662.5,212.7 663.0,212.6 663.5,211.9 664.0,213.8 664.5,215.1 665.0,216.0 665.5,216.7 666.0,217.4 666.5,217.9 667.0,218.4 667.5,218.9 668.0,219.3 668.5,219.6 669.0,219.6 669.5,219.5 670.0,217.1 670.5,214.3 671.0,213.7 671.5,215.1 672.0,216.0 672.5,216.7 673.0,217.2 673.5,217.6 674.0,218.0 674.5,218.3 675.0,218.6 675.5,218.9 676.0,219.2 676.5,219.4 677.0,219.6 677.5,218.6 678.0,214.3 678.5,209.3 679.0,209.1 679.5,211.4 680.0,212.9 680.5,214.0 681.0,214.9 681.5,215.6 682.0,216.2 682.5,216.7 683.0,217.2 683.5,217.7 684.0,218.1 684.5,218.6 685.0,219.0 685.5,219.4 686.0,219.6 686.5,217.9 687.0,214.9 687.5,212.9 688.0,213.9 688.5,215.1 689.0,215.9 689.5,216.5 690.0,217.0 690.5,217.4 691.0,217.8 691.5,218.1 692.0,218.5 692.5,218.8 693.0,219.0 693.5,219.3 694.0,219.5 694.5,218.7 695.0,213.6 695.5,207.6 696.0,206.4 696.5,209.8 697.0,209.8 697.5,209.8 698.0,209.8 698.5,211.6 699.0,213.3 699.5,214.4 700.0,215.2 700.5,215.9 701.0,216.5 701.5,217.1 702.0,217.6 702.5,218.0 703.0,218.5 703.5,218.9 704.0,219.3 704.5,217.3 705.0,214.2 705.5,212.9 706.0,214.2 706.5,215.3 707.0,216.1 707.5,216.6 708.0,217.1 708.5,217.5 709.0,217.9 709.5,218.2 710.0,218.5 710.5,218.8 711.0,219.1 711.5,219.3 712.0,219.6 712.5,219.6 713.0,218.2 713.5,213.8 714.0,208.8 714.5,209.4 715.0,211.9 715.5,213.7 716.0,215.1 716.5,216.2 717.0,217.1 717.5,217.9 718.0,218.7 718.5,219.3 719.0,219.6 719.5,219.6 720.0,219.6 720.5,219.6 721.0,218.7 721.5,216.8 722.0,215.5 722.5,215.5 723.0,216.4 723.5,217.2 724.0,217.7 724.5,218.2 725.0,218.5 725.5,218.9 726.0,219.1 726.5,219.4 727.0,218.4 727.5,216.1 728.0,214.6 728.5,215.2 729.0,216.5 729.5,217.4 730.0,214.8 730.5,209.8 731.0,208.8 731.5,212.1 732.0,214.5 732.5,214.0 733.0,214.0 733.5,214.0 734.0,214.0 734.5,214.0 735.0,214.6 735.5,215.7 736.0,216.5 736.5,217.1 737.0,217.6 737.5,218.0 738.0,218.3 738.5,218.6 739.0,218.9 739.5,219.2 740.0,219.5 740.5,219.6 741.0,219.6 741.5,219.6 742.0,219.0 742.5,214.8 743.0,209.8 743.5,208.8 744.0,211.5 744.5,213.4 745.0,214.8 745.5,216.0 746.0,216.9 746.5,217.8 747.0,218.5 747.5,215.3 748.0,210.8 748.5,209.8 749.0,209.8 749.5,209.8 750.0,209.8 750.5,209.8 751.0,211.6 751.5,213.1 752.0,214.1 752.5,214.9 753.0,215.5 753.5,216.1 754.0,216.5 754.5,217.0 755.0,217.4 755.5,217.8 756.0,218.1 756.5,218.5 757.0,218.8 757.5,219.2 758.0,219.5 758.5,219.6 759.0,219.6 759.5,219.6 760.0,219.6 760.5,219.3 761.0,217.3 761.5,215.0 762.0,215.0 762.5,216.3 763.0,217.3 763.5,218.0 764.0,218.0 764.5,215.1 765.0,213.2 765.5,213.9 766.0,215.2 766.5,216.1 767.0,216.7 767.5,217.3 768.0,217.7 768.5,218.1 769.0,218.5 769.5,218.8 770.0,219.1 770.5,219.4 771.0,219.6 771.5,219.6 772.0,215.8 772.5,210.1 773.0,206.4 773.5,208.5 774.0,211.1 774.5,213.1 775.0,214.6 775.5,215.8 776.0,216.9 776.5,214.6 777.0,214.9 777.5,216.1 778.0,217.0 778.5,217.7 779.0,218.2 779.5,218.7 780.0,219.1 780.5,218.5 781.0,212.5 781.5,205.6 782.0,204.1 782.5,204.9 783.0,208.0 783.5,210.1 784.0,211.6 784.5,212.8 785.0,213.7 785.5,214.6 786.0,215.4 786.5,216.1 787.0,216.7 787.5,217.4 788.0,218.0 788.5,218.5 789.0,219.1 789.5,219.5 790.0,217.2 790.5,213.4 791.0,210.8 791.5,212.2 792.0,213.9 792.5,215.1 793.0,216.0 793.5,216.8 794.0,217.4 794.5,218.0 795.0,218.5 795.5,219.0 796.0,219.4 796.5,219.6 797.0,219.6 797.5,219.6 798.0,217.4 798.5,213.8 799.0,211.5 799.5,212.3 800.0,213.9 800.5,215.0 801.0,215.9 801.5,216.5 802.0,217.1 802.5,217.6 803.0,218.0 803.5,218.4 804.0,218.8 804.5,219.2 805.0,219.5 805.5,219.6 806.0,216.6 806.5,211.8 807.0,208.8 807.5,210.9 808.0,213.6 808.5,215.7 809.0,215.6 809.5,211.9 810.0,211.9 810.5,213.8 811.0,215.1 811.5,216.1 812.0,216.9 812.5,217.6 813.0,218.2 813.5,218.7 814.0,219.1 814.5,217.6 815.0,214.1 815.5,211.9 816.0,212.7 816.5,214.2 817.0,215.2 817.5,216.0 818.0,216.6 818.5,217.1 819.0,217.5 819.5,217.9 820.0,218.3 820.5,218.7 821.0,219.0 821.5,219.3 822.0,219.6 822.5,219.6 823.0,219.6 823.5,215.5 824.0,210.4 824.5,208.2 825.0,210.3 825.5,212.1 826.0,213.4 826.5,214.4 827.0,215.1 827.5,215.8 828.0,216.4 828.5,216.9 829.0,217.4 829.5,217.9 830.0,218.4 830.5,218.8 831.0,219.2 831.5,219.6 832.0,219.6 832.5,219.6 833.0,216.1 833.5,207.0 834.0,196.6 834.5,197.8 835.0,202.3 835.5,205.4 836.0,207.6 836.5,209.3 837.0,210.7 837.5,212.0 838.0,213.1 838.5,214.1 839.0,215.1 839.5,216.1 840.0,216.9 840.5,217.8 841.0,212.8 841.5,206.0 842.0,204.6 842.5,207.9 843.0,210.1 843.5,211.6 844.0,212.8 844.5,213.8 845.0,214.6 845.5,215.4 846.0,216.1 846.5,216.7 847.0,217.3 847.5,217.9 848.0,218.5 848.5,219.0 849.0,219.5 849.5,219.6 850.0,214.9 850.5,208.1 851.0,203.6 851.5,205.8 852.0,208.6 852.5,210.4 853.0,211.8 853.5,213.0 854.0,213.9 854.5,214.7 855.0,215.5 855.5,216.2 856.0,216.9 856.5,217.5 857.0,218.1 857.5,218.7 858.0,219.2 858.5,219.6 859.0,216.4 859.5,207.8 860.0,198.0 860.5,199.4 861.0,204.7 861.5,208.5 862.0,210.6 862.5,211.7 863.0,212.5 863.5,213.0 864.0,213.4 864.5,210.8 865.0,210.8 865.5,210.8 866.0,211.7 866.5,213.1 867.0,214.1 867.5,214.7 868.0,215.2 868.5,215.5 869.0,215.7 869.5,215.9 870.0,216.1 870.5,216.3 871.0,216.5 871.5,216.6 872.0,216.8 872.5,217.0 873.0,217.2 873.5,217.4 874.0,217.6 874.5,217.7 875.0,217.9 875.5,218.1 876.0,217.0 876.5,214.5 877.0,214.5 877.5,215.8 878.0,216.8 878.5,217.5 879.0,218.1 879.5,218.6 880.0,219.0 880.5,219.4 881.0,219.6 881.5,219.6 882.0,219.6 882.5,219.6 883.0,219.6 883.5,219.6 884.0,219.6 884.5,219.6 885.0,219.6 885.5,219.6 886.0,219.6 886.5,219.3 887.0,212.3 887.5,203.8 888.0,200.1 888.5,205.6 889.0,210.9 889.5,215.1 890.0,215.8 890.5,215.0 891.0,208.7 891.5,213.7 892.0,209.6 892.5,215.8 893.0,212.4 893.5,212.7 894.0,211.5 894.5,215.8 895.0,212.5 895.5,215.8 896.0,211.4 896.5,206.5 897.0,211.4 897.5,214.9 898.0,215.0 898.5,215.0 899.0,215.2 899.5,215.0 900.0,215.8 900.5,215.0 901.0,211.4 901.5,214.9 902.0,215.9 902.5,213.0 903.0,212.6 903.5,209.7 904.0,213.4 904.5,214.4 905.0,215.1 905.5,213.6 906.0,214.7 906.5,209.7 907.0,215.7 907.5,215.9 908.0,213.6 908.5,212.8 909.0,208.6 909.5,212.8 910.0,215.3 910.5,214.5 911.0,215.0 911.5,215.4 912.0,215.9 912.5,214.5 913.0,215.5 913.5,214.8 914.0,215.2 914.5,211.7 915.0,213.9 915.5,210.3 916.0,213.9 916.5,215.5 917.0,214.7 917.5,215.2 918.0,215.0 918.5,215.3 919.0,215.6 919.5,212.3 920.0,213.6 920.5,213.1 921.0,215.0 921.5,212.2 922.0,207.8 922.5,209.5 923.0,213.8 923.5,215.5 924.0,212.9 924.5,215.4 925.0,212.1 925.5,214.9 926.0,215.7 926.5,213.9 927.0,213.4 927.5,209.7 928.0,213.4 928.5,213.4 929.0,215.8 929.5,215.1 930.0,213.9 930.5,215.1 931.0,215.6 931.5,215.7 932.0,214.0 932.5,212.1 933.0,213.0 933.5,211.0 934.0,214.3 934.5,215.8 935.0,214.7 935.5,210.8 936.0,213.5 936.5,212.6 937.0,215.1 937.5,215.0 938.0,215.5 938.5,215.9 939.0,210.4 939.5,209.7 940.0,213.4 940.5,215.2 941.0,215.9 941.5,214.5 942.0,215.5 942.5,213.7 943.0,213.3 943.5,213.7 944.0,213.0 944.5,209.1 945.0,213.0 945.5,214.2 946.0,214.4 946.5,215.8 947.0,214.7 947.5,215.5 948.0,212.5 948.5,212.4 949.0,214.7 949.5,215.2 950.0,215.3 950.5,211.3 951.0,213.4 951.5,209.7 952.0,213.4 952.5,215.1 953.0,214.6 953.5,215.2 954.0,214.3 954.5,214.8 955.0,215.6 955.5,215.9 956.0,214.8 956.5,211.4 957.0,206.5 957.5,211.4 958.0,215.9 958.5,215.9 959.0,215.1 959.5,215.3 960.0,214.7 960.5,216.3 961.0,215.5 961.5,216.0 962.0,213.0 962.5,209.1 963.0,213.0 963.5,215.8 964.0,212.5 964.5,214.9 965.0,216.6 965.5,214.8 966.0,216.6 966.5,215.8 967.0,216.7 967.5,215.9 968.0,212.6 968.5,208.4 969.0,212.6 969.5,216.6 970.0,215.3 970.5,216.7 971.0,216.3 971.5,216.9 972.0,216.6 972.5,217.2 973.0,216.6 973.5,216.4 974.0,215.5 974.5,212.8 975.0,215.5 975.5,217.1 976.0,216.5 976.5,217.0 977.0,217.4 977.5,217.3 978.0,214.2 978.5,216.2 979.0,217.6 979.5,216.8 980.0,216.7 980.5,214.7 981.0,216.7 981.5,216.4 982.0,215.4 982.5,217.3 983.0,215.8 983.5,217.7 984.0,216.1 984.5,218.1 985.0,217.6 985.5,216.6 986.0,217.5 986.5,218.5 987.0,218.6 987.5,218.4 988.0,218.6 988.5,218.9 989.0,219.2 989.5,219.1 990.0,219.4 990.5,219.4 991.0,219.6 991.5,219.6 992.0,219.6 992.5,219.6 992.5,220.8 992.0,220.8 991.5,220.8 991.0,220.8 990.5,221.3 990.0,221.1 989.5,221.1 989.0,221.4 988.5,221.4 988.0,221.7 987.5,223.4 987.0,222.3 986.5,222.2 986.0,222.4 985.5,223.7 985.0,222.7 984.5,222.7 984.0,222.9 983.5,222.9 983.0,223.1 982.5,222.9 982.0,222.7 981.5,224.5 981.0,224.6 980.5,225.4 980.0,224.8 979.5,224.5 979.0,225.2 978.5,223.4 978.0,223.0 977.5,222.8 977.0,224.9 976.5,225.7 976.0,224.9 975.5,225.9 975.0,225.7 974.5,227.5 974.0,224.9 973.5,224.0 973.0,223.2 972.5,223.7 972.0,225.0 971.5,224.1 971.0,226.7 970.5,224.2 970.0,223.5 969.5,224.3 969.0,225.6 968.5,228.6 968.0,225.6 967.5,225.0 967.0,225.0 966.5,224.0 966.0,224.0 965.5,226.5 965.0,224.6 964.5,226.3 964.0,224.6 963.5,226.6 963.0,226.0 962.5,229.1 962.0,228.3 961.5,226.6 961.0,225.6 960.5,228.1 960.0,224.6 959.5,225.8 959.0,224.3 958.5,226.1 958.0,224.7 957.5,226.9 957.0,230.7 956.5,226.9 956.0,227.6 955.5,225.2 955.0,225.3 954.5,225.2 954.0,224.9 953.5,226.2 953.0,225.4 952.5,225.9 952.0,226.9 951.5,230.7 951.0,226.9 950.5,224.8 950.0,225.6 949.5,225.8 949.0,224.7 948.5,224.9 948.0,226.9 947.5,226.3 947.0,226.9 946.5,224.6 946.0,226.3 945.5,225.7 945.0,226.7 944.5,230.0 944.0,226.3 943.5,225.2 943.0,226.0 942.5,229.2 942.0,224.9 941.5,224.6 941.0,225.2 940.5,225.1 940.0,227.6 939.5,231.8 939.0,228.7 938.5,224.5 938.0,225.7 937.5,231.3 937.0,227.0 936.5,225.4 936.0,225.3 935.5,226.5 935.0,225.2 934.5,226.5 934.0,225.9 933.5,229.1 933.0,226.2 932.5,229.3 932.0,226.4 931.5,225.1 931.0,228.0 930.5,225.6 930.0,230.1 929.5,224.5 929.0,227.4 928.5,225.3 928.0,226.3 927.5,229.6 927.0,226.3 926.5,225.8 926.0,225.7 925.5,224.5 925.0,225.5 924.5,225.7 924.0,231.4 923.5,225.6 923.0,227.5 922.5,227.3 922.0,231.2 921.5,227.3 921.0,225.0 920.5,225.4 920.0,224.5 919.5,225.4 919.0,227.3 918.5,227.1 918.0,225.7 917.5,225.9 917.0,224.8 916.5,225.4 916.0,225.6 915.5,228.6 915.0,226.1 914.5,224.8 914.0,227.3 913.5,229.9 913.0,225.1 912.5,225.0 912.0,225.4 911.5,226.3 911.0,227.5 910.5,226.3 910.0,224.7 909.5,225.6 909.0,228.6 908.5,225.6 908.0,225.8 907.5,224.9 907.0,226.0 906.5,225.7 906.0,227.6 905.5,224.7 905.0,224.6 904.5,225.5 904.0,226.3 903.5,229.6 903.0,226.3 902.5,224.9 902.0,228.7 901.5,225.3 901.0,230.8 900.5,225.6 900.0,225.3 899.5,225.1 899.0,225.6 898.5,229.3 898.0,224.6 897.5,226.6 897.0,226.9 896.5,230.7 896.0,226.9 895.5,225.5 895.0,224.9 894.5,228.5 894.0,226.9 893.5,224.9 893.0,227.3 892.5,230.2 892.0,225.2 891.5,225.4 891.0,224.6 890.5,225.1 890.0,226.4 889.5,226.7 889.0,229.2 888.5,234.3 888.0,239.6 887.5,236.1 887.0,227.9 886.5,221.1 886.0,220.8 885.5,220.8 885.0,220.8 884.5,220.8 884.0,220.8 883.5,220.8 883.0,220.8 882.5,220.8 882.0,220.8 881.5,220.8 881.0,220.8 880.5,220.8 880.0,221.1 879.5,221.4 879.0,221.7 878.5,222.1 878.0,222.7 877.5,223.4 877.0,224.4 876.5,224.4 876.0,222.5 875.5,222.0 875.0,222.1 874.5,222.3 874.0,222.4 873.5,222.5 873.0,222.7 872.5,222.8 872.0,223.0 871.5,223.2 871.0,223.3 870.5,223.5 870.0,223.7 869.5,224.0 869.0,224.3 868.5,224.6 868.0,224.9 867.5,225.4 867.0,226.0 866.5,226.9 866.0,228.3 865.5,229.0 865.0,229.0 864.5,229.0 864.0,226.7 863.5,226.2 863.0,226.6 862.5,227.3 862.0,228.2 861.5,229.7 861.0,230.8 860.5,234.4 860.0,235.3 859.5,228.6 859.0,222.8 858.5,220.8 858.0,221.0 857.5,221.5 857.0,222.0 856.5,222.5 856.0,223.1 855.5,223.7 855.0,224.3 854.5,225.0 854.0,225.7 853.5,226.5 853.0,227.5 852.5,228.7 852.0,230.4 851.5,232.8 851.0,234.8 850.5,230.8 850.0,224.8 849.5,220.8 849.0,220.9 848.5,221.4 848.0,222.0 847.5,222.5 847.0,223.2 846.5,223.8 846.0,224.5 845.5,225.2 845.0,226.0 844.5,226.8 844.0,227.8 843.5,229.1 843.0,230.7 842.5,232.9 842.0,236.3 841.5,234.8 841.0,227.9 840.5,222.2 840.0,222.9 839.5,223.7 839.0,224.4 838.5,225.3 838.0,226.1 837.5,227.1 837.0,228.1 836.5,229.3 836.0,230.7 835.5,232.6 835.0,235.2 834.5,239.0 834.0,240.0 833.5,231.2 833.0,223.6 832.5,220.8 832.0,220.8 831.5,220.9 831.0,221.2 830.5,221.7 830.0,222.1 829.5,222.6 829.0,223.1 828.5,223.6 828.0,224.2 827.5,224.8 827.0,225.5 826.5,226.3 826.0,227.3 825.5,228.6 825.0,230.5 824.5,232.7 824.0,230.4 823.5,225.1 823.0,220.8 822.5,220.8 822.0,220.8 821.5,221.1 821.0,221.4 820.5,221.8 820.0,222.2 819.5,222.6 819.0,223.0 818.5,223.5 818.0,224.0 817.5,224.6 817.0,225.4 816.5,226.5 816.0,228.1 815.5,228.9 815.0,226.6 814.5,223.0 814.0,221.4 813.5,221.9 813.0,222.5 812.5,223.1 812.0,223.9 811.5,224.8 811.0,225.9 810.5,227.4 810.0,229.6 809.5,229.6 809.0,225.4 808.5,224.0 808.0,225.8 807.5,228.1 807.0,229.9 806.5,227.3 806.0,223.3 805.5,220.8 805.0,220.8 804.5,221.0 804.0,221.3 803.5,221.7 803.0,222.0 802.5,222.4 802.0,222.8 801.5,223.3 801.0,223.8 800.5,224.5 800.0,225.4 799.5,226.8 799.0,227.5 798.5,225.5 798.0,222.5 797.5,220.8 797.0,220.8 796.5,220.8 796.0,220.9 795.5,221.2 795.0,221.6 794.5,222.1 794.0,222.5 793.5,223.1 793.0,223.7 792.5,224.5 792.0,225.5 791.5,226.9 791.0,228.0 790.5,225.9 790.0,222.7 789.5,220.8 789.0,221.3 788.5,221.8 788.0,222.4 787.5,222.9 787.0,223.6 786.5,224.2 786.0,224.9 785.5,225.6 785.0,226.4 784.5,227.4 784.0,228.5 783.5,230.0 783.0,232.0 782.5,235.0 782.0,235.8 781.5,234.4 781.0,227.6 780.5,221.9 780.0,221.1 779.5,221.5 779.0,221.8 778.5,222.3 778.0,222.9 777.5,223.6 777.0,224.6 776.5,224.9 776.0,223.7 775.5,224.8 775.0,226.1 774.5,227.7 774.0,229.7 773.5,232.5 773.0,234.8 772.5,230.8 772.0,224.8 771.5,220.8 771.0,220.8 770.5,221.0 770.0,221.3 769.5,221.6 769.0,221.9 768.5,222.3 768.0,222.7 767.5,223.1 767.0,223.7 766.5,224.3 766.0,225.2 765.5,226.5 765.0,227.2 764.5,225.3 764.0,222.4 763.5,221.9 763.0,222.5 762.5,223.3 762.0,224.4 761.5,224.4 761.0,222.5 760.5,220.9 760.0,220.8 759.5,220.8 759.0,220.8 758.5,220.8 758.0,220.9 757.5,221.2 757.0,221.5 756.5,221.8 756.0,222.2 755.5,222.5 755.0,222.9 754.5,223.3 754.0,223.7 753.5,224.2 753.0,224.7 752.5,225.3 752.0,226.0 751.5,227.0 751.0,228.5 750.5,230.2 750.0,230.2 749.5,230.2 749.0,230.2 748.5,230.2 748.0,229.3 747.5,224.9 747.0,222.2 746.5,223.0 746.0,224.0 745.5,225.2 745.0,226.5 744.5,228.2 744.0,230.5 743.5,233.7 743.0,232.5 742.5,226.6 742.0,221.6 741.5,220.8 741.0,220.8 740.5,220.8 740.0,221.2 739.5,221.5 739.0,221.9 738.5,222.3 738.0,222.7 737.5,223.2 737.0,223.7 736.5,224.3 736.0,225.1 735.5,226.2 735.0,227.7 734.5,228.5 734.0,228.5 733.5,228.5 733.0,228.5 732.5,228.5 732.0,226.9 731.5,229.8 731.0,233.7 730.5,232.5 730.0,226.6 729.5,223.0 729.0,223.9 728.5,225.2 728.0,225.8 727.5,224.3 727.0,222.0 726.5,220.8 726.0,221.0 725.5,221.2 725.0,221.4 724.5,221.7 724.0,222.0 723.5,222.4 723.0,223.0 722.5,223.6 722.0,223.6 721.5,222.7 721.0,221.3 720.5,220.8 720.0,220.8 719.5,220.8 719.0,220.8 718.5,220.9 718.0,221.4 717.5,221.9 717.0,222.6 716.5,223.3 716.0,224.2 715.5,225.2 715.0,226.6 714.5,228.6 714.0,229.0 713.5,225.1 713.0,221.7 712.5,220.8 712.0,220.8 711.5,221.1 711.0,221.4 710.5,221.7 710.0,222.0 709.5,222.3 709.0,222.7 708.5,223.1 708.0,223.5 707.5,224.0 707.0,224.6 706.5,225.5 706.0,226.6 705.5,228.0 705.0,226.6 704.5,223.3 704.0,221.0 703.5,221.4 703.0,221.8 702.5,222.2 702.0,222.6 701.5,223.0 701.0,223.5 700.5,224.0 700.0,224.7 699.5,225.4 699.0,226.5 698.5,227.9 698.0,229.6 697.5,229.6 697.0,229.6 696.5,229.9 696.0,233.2 695.5,232.0 695.0,226.4 694.5,221.6 694.0,221.0 693.5,221.3 693.0,221.6 692.5,222.0 692.0,222.3 691.5,222.7 691.0,223.1 690.5,223.5 690.0,224.0 689.5,224.6 689.0,225.4 688.5,226.4 688.0,227.8 687.5,229.0 687.0,226.7 686.5,223.0 686.0,220.8 685.5,220.9 685.0,221.3 684.5,221.6 684.0,222.0 683.5,222.4 683.0,222.8 682.5,223.2 682.0,223.7 681.5,224.3 681.0,224.9 680.5,225.6 680.0,226.6 679.5,227.9 679.0,229.9 678.5,229.7 678.0,225.4 677.5,221.6 677.0,221.0 676.5,221.3 676.0,221.7 675.5,222.1 675.0,222.5 674.5,222.9 674.0,223.4 673.5,223.9 673.0,224.5 672.5,225.3 672.0,226.2 671.5,227.6 671.0,229.6 670.5,228.7 670.0,224.7 669.5,221.2 669.0,220.8 668.5,220.8 668.0,220.9 667.5,221.2 667.0,221.5 666.5,221.9 666.0,222.3 665.5,222.8 665.0,223.3 664.5,224.1 664.0,225.0 663.5,226.4 663.0,225.9 662.5,227.0 662.0,229.2 661.5,232.3 661.0,232.1 660.5,226.6 660.0,221.9 659.5,220.8 659.0,220.8 658.5,220.8 658.0,220.8 657.5,221.0 657.0,221.2 656.5,221.5 656.0,221.8 655.5,222.1 655.0,222.4 654.5,222.8 654.0,223.3 653.5,223.9 653.0,224.9 652.5,225.4 652.0,224.0 651.5,222.1 651.0,222.8 650.5,223.6 650.0,224.8 649.5,225.4 649.0,223.5 648.5,221.7 648.0,222.4 647.5,223.2 647.0,224.1 646.5,225.3 646.0,226.8 645.5,228.5 645.0,227.0 644.5,223.5 644.0,220.8 643.5,221.2 643.0,221.7 642.5,222.3 642.0,223.0 641.5,224.0 641.0,225.3 640.5,225.9 640.0,224.4 639.5,224.0 639.0,225.3 638.5,225.9 638.0,225.9 637.5,225.9 637.0,224.4 636.5,222.2 636.0,222.9 635.5,223.8 635.0,225.1 634.5,225.4 634.0,223.5 633.5,221.7 633.0,222.4 632.5,223.2 632.0,224.3 631.5,225.6 631.0,227.5 630.5,226.8 630.0,223.7 629.5,221.0 629.0,220.8 628.5,220.8 628.0,220.8 627.5,220.8 627.0,220.9 626.5,221.1 626.0,221.2 625.5,221.5 625.0,221.8 624.5,222.3 624.0,222.3 623.5,221.4 623.0,220.8 622.5,220.8 622.0,220.8 621.5,220.8 621.0,220.8 620.5,221.0 620.0,221.3 619.5,221.7 619.0,222.1 618.5,222.5 618.0,223.0 617.5,223.6 617.0,224.2 616.5,225.1 616.0,226.3 615.5,228.0 615.0,228.0 614.5,228.0 614.0,228.0 613.5,224.6 613.0,223.4 612.5,223.8 612.0,223.8 611.5,222.9 611.0,221.4 610.5,220.8 610.0,220.8 609.5,220.8 609.0,220.8 608.5,220.8 608.0,220.8 607.5,220.8 607.0,220.8 606.5,220.9 606.0,221.0 605.5,221.2 605.0,221.4 604.5,221.6 604.0,221.6 603.5,221.6 603.0,221.6 602.5,221.6 602.0,221.6 601.5,221.6 601.0,221.6 600.5,221.2 600.0,221.1 599.5,221.4 599.0,221.7 598.5,222.0 598.0,222.3 597.5,222.7 597.0,223.0 596.5,223.5 596.0,224.0 595.5,224.6 595.0,225.4 594.5,226.5 594.0,228.0 593.5,227.6 593.0,224.2 592.5,221.3 592.0,221.5 591.5,222.1 591.0,222.8 590.5,223.5 590.0,224.3 589.5,225.1 589.0,226.0 588.5,226.9 588.0,227.9 587.5,229.0 587.0,230.4 586.5,232.2 586.0,234.6 585.5,238.1 585.0,240.0 584.5,234.6 584.0,226.5 583.5,220.8 583.0,220.9 582.5,221.3 582.0,221.8 581.5,222.3 581.0,222.9 580.5,223.4 580.0,224.1 579.5,224.7 579.0,225.4 578.5,226.2 578.0,227.1 577.5,228.2 577.0,229.7 576.5,231.7 576.0,234.8 575.5,233.4 575.0,227.1 574.5,222.1 574.0,222.6 573.5,223.2 573.0,223.8 572.5,224.4 572.0,225.2 571.5,226.1 571.0,227.2 570.5,228.8 570.0,231.1 569.5,231.6 569.0,231.6 568.5,231.7 568.0,234.8 567.5,232.1 567.0,226.0 566.5,220.9 566.0,220.8 565.5,220.8 565.0,220.8 564.5,221.1 564.0,221.5 563.5,221.9 563.0,222.3 562.5,222.7 562.0,223.2 561.5,223.7 561.0,224.3 560.5,225.0 560.0,225.8 559.5,226.9 559.0,228.4 558.5,230.2 558.0,229.3 557.5,224.9 557.0,221.3 556.5,220.9 556.0,221.3 555.5,221.7 555.0,222.3 554.5,223.0 554.0,223.9 553.5,224.4 553.0,223.2 552.5,222.2 552.0,223.1 551.5,224.1 551.0,225.4 550.5,227.1 550.0,228.5 549.5,226.3 549.0,222.8 548.5,220.8 548.0,220.9 547.5,221.2 547.0,221.5 546.5,221.9 546.0,222.2 545.5,222.6 545.0,223.0 544.5,223.5 544.0,224.0 543.5,224.7 543.0,225.6 542.5,226.7 542.0,228.5 541.5,228.5 541.0,224.8 540.5,221.6 540.0,221.1 539.5,221.4 539.0,221.7 538.5,222.1 538.0,222.5 537.5,222.9 537.0,223.4 536.5,224.1 536.0,225.1 535.5,226.4 535.0,226.4 534.5,226.4 534.0,226.4 533.5,226.4 533.0,224.8 532.5,224.9 532.0,224.9 531.5,224.9 531.0,223.6 530.5,221.7 530.0,220.8 529.5,221.0 529.0,221.3 528.5,221.6 528.0,221.9 527.5,222.2 527.0,222.6 526.5,223.0 526.0,223.5 525.5,224.2 525.0,225.1 524.5,226.4 524.0,226.4 523.5,223.7 523.0,221.3 522.5,220.8 522.0,220.8 521.5,220.8 521.0,220.8 520.5,220.8 520.0,220.8"/><polygon fill="#20392f" points="352.2,485.8 352.7,484.8 353.2,482.8 353.7,481.5 354.2,481.5 354.7,481.5 355.2,481.8 355.7,482.9 356.2,483.7 356.7,484.3 357.2,484.8 357.7,485.2 358.2,485.0 358.7,485.0 359.2,485.0 359.7,485.0 360.2,485.0 360.7,485.3 361.2,485.6 361.7,485.8 362.2,485.8 362.7,485.8 363.2,481.6 363.7,476.4 364.2,474.2 364.7,476.4 365.2,478.3 365.7,479.6 366.2,480.6 366.7,481.4 367.2,482.1 367.7,482.7 368.2,483.3 368.7,483.9 369.2,484.4 369.7,484.9 370.2,485.3 370.7,485.7 371.2,484.9 371.7,481.5 372.2,477.7 372.7,478.1 373.2,479.8 373.7,481.0 374.2,481.8 374.7,482.5 375.2,483.0 375.7,483.5 376.2,483.9 376.7,484.4 377.2,484.7 377.7,485.1 378.2,485.4 378.7,485.7 379.2,485.8 379.7,485.6 380.2,482.8 380.7,479.5 381.2,478.8 381.7,480.5 382.2,481.6 382.7,482.5 383.2,483.1 383.7,483.7 384.2,484.1 384.7,484.6 385.2,484.9 385.7,485.3 386.2,485.6 386.7,485.8 387.2,485.8 387.7,485.8 388.2,485.8 388.7,484.2 389.2,481.8 389.7,480.8 390.2,481.8 390.7,482.6 391.2,483.2 391.7,483.7 392.2,484.0 392.7,484.3 393.2,484.6 393.7,484.9 394.2,485.1 394.7,485.3 395.2,485.5 395.7,485.7 396.2,485.8 396.7,485.8 397.2,485.8 397.7,485.8 398.2,484.2 398.7,480.6 399.2,477.5 399.7,478.0 400.2,479.2 400.7,476.5 401.2,476.5 401.7,476.5 402.2,476.5 402.7,476.5 403.2,478.7 403.7,480.2 404.2,481.3 404.7,482.1 405.2,482.8 405.7,483.4 406.2,484.0 406.7,484.5 407.2,484.0 407.7,481.5 408.2,480.4 408.7,480.4 409.2,481.7 409.7,482.5 410.2,483.1 410.7,483.6 411.2,484.0 411.7,484.3 412.2,484.6 412.7,484.9 413.2,485.2 413.7,485.4 414.2,485.7 414.7,485.8 415.2,485.8 415.7,481.7 416.2,475.5 416.7,471.5 417.2,473.7 417.7,476.3 418.2,478.1 418.7,479.5 419.2,480.6 419.7,481.6 420.2,482.5 420.7,483.2 421.2,484.0 421.7,484.6 422.2,485.3 422.7,485.8 423.2,485.8 423.7,485.8 424.2,485.8 424.7,485.2 425.2,483.2 425.7,481.5 426.2,481.9 426.7,482.8 427.2,483.4 427.7,483.9 428.2,484.3 428.7,484.6 429.2,484.8 429.7,485.1 430.2,485.3 430.7,485.5 431.2,485.7 431.7,485.8 432.2,485.8 432.7,485.8 433.2,485.8 433.7,485.2 434.2,481.2 434.7,476.4 435.2,475.4 435.7,477.7 436.2,479.3 436.7,480.4 437.2,481.3 437.7,482.0 438.2,482.6 438.7,483.2 439.2,483.7 439.7,484.2 440.2,484.7 440.7,485.1 441.2,485.5 441.7,485.8 442.2,485.1 442.7,482.9 443.2,481.0 443.7,481.3 444.2,482.3 444.7,483.0 445.2,483.5 445.7,483.9 446.2,484.2 446.7,484.5 447.2,484.8 447.7,485.0 448.2,485.2 448.7,485.4 449.2,485.7 449.7,485.8 450.2,485.8 450.7,485.8 451.2,485.7 451.7,483.2 452.2,480.4 452.7,479.7 453.2,481.2 453.7,482.2 454.2,482.9 454.7,483.5 455.2,484.0 455.7,484.4 456.2,484.8 456.7,485.1 457.2,485.4 457.7,485.7 458.2,485.8 458.7,485.8 459.2,483.6 459.7,481.1 460.2,480.6 460.7,480.9 461.2,482.0 461.7,482.7 462.2,483.3 462.7,483.7 463.2,484.1 463.7,484.4 464.2,484.6 464.7,484.9 465.2,485.1 465.7,485.4 466.2,485.6 466.7,485.8 467.2,485.8 467.7,484.3 468.2,482.1 468.7,481.2 469.2,481.2 469.7,480.9 470.2,478.9 470.7,478.9 471.2,480.5 471.7,481.9 472.2,483.0 472.7,480.0 473.2,479.3 473.7,479.7 474.2,481.3 474.7,482.4 475.2,483.2 475.7,483.9 476.2,484.5 476.7,485.0 477.2,485.5 477.7,483.0 478.2,478.0 478.7,474.1 479.2,475.6 479.7,477.8 480.2,479.4 480.7,480.6 481.2,481.5 481.7,482.4 482.2,483.1 482.7,483.7 483.2,484.3 483.7,484.9 484.2,485.4 484.7,485.8 485.2,485.8 485.7,482.1 486.2,476.5 486.7,472.8 487.2,474.6 487.7,476.9 488.2,478.4 488.7,479.6 489.2,480.5 489.7,481.2 490.2,481.9 490.7,482.5 491.2,483.1 491.7,483.7 492.2,484.2 492.7,484.7 493.2,485.2 493.7,485.6 494.2,485.8 494.7,485.8 495.2,485.1 495.7,483.4 496.2,482.2 496.7,482.2 497.2,482.8 497.7,479.3 498.2,475.4 498.7,476.5 499.2,478.5 499.7,479.9 500.2,480.9 500.7,481.8 501.2,482.5 501.7,483.1 502.2,483.7 502.7,484.2 503.2,484.7 503.7,485.1 504.2,485.6 504.7,484.7 505.2,481.9 505.7,479.3 506.2,480.0 506.7,481.3 507.2,482.1 507.7,482.7 508.2,483.2 508.7,483.6 509.2,484.0 509.7,484.3 510.2,484.6 510.7,484.9 511.2,485.2 511.7,485.5 512.2,485.7 512.7,485.8 513.2,485.8 513.7,484.9 514.2,479.7 514.7,473.6 515.2,472.4 515.7,475.3 516.2,477.3 516.7,478.7 517.2,479.7 517.7,480.6 518.2,481.4 518.7,482.1 519.2,482.7 519.7,483.3 520.2,483.8 520.7,484.4 521.2,484.9 521.7,485.3 522.2,485.8 522.7,485.8 523.2,484.7 523.7,482.5 524.2,481.0 524.7,481.8 525.2,482.7 525.7,483.3 526.2,483.8 526.7,484.2 527.2,484.5 527.7,484.8 528.2,485.1 528.7,485.4 529.2,485.6 529.7,485.8 530.2,485.8 530.7,485.8 531.2,485.8 531.7,485.8 532.2,485.8 532.7,483.2 533.2,478.5 533.7,475.0 534.2,476.3 534.7,478.3 535.2,479.7 535.7,480.7 536.2,481.5 536.7,482.2 537.2,482.8 537.7,483.4 538.2,483.9 538.7,484.4 539.2,484.8 539.7,485.2 540.2,485.6 540.7,483.0 541.2,478.7 541.7,475.8 542.2,477.2 542.7,479.0 543.2,480.2 543.7,481.1 544.2,481.8 544.7,482.4 545.2,482.9 545.7,483.4 546.2,483.9 546.7,484.3 547.2,484.7 547.7,485.1 548.2,485.4 548.7,485.8 549.2,485.0 549.7,481.8 550.2,478.1 550.7,478.5 551.2,480.1 551.7,481.2 552.2,482.0 552.7,482.7 553.2,483.2 553.7,483.7 554.2,484.1 554.7,484.4 555.2,484.8 555.7,485.1 556.2,485.5 556.7,485.8 557.2,484.4 557.7,481.0 558.2,478.1 558.7,478.9 559.2,480.3 559.7,481.4 560.2,482.1 560.7,482.7 561.2,483.2 561.7,483.6 562.2,484.0 562.7,484.3 563.2,484.7 563.7,485.0 564.2,485.3 564.7,485.6 565.2,485.8 565.7,485.8 566.2,485.8 566.7,482.9 567.2,474.9 567.7,465.9 568.2,467.1 568.7,472.0 569.2,475.0 569.7,475.0 570.2,475.0 570.7,477.0 571.2,478.8 571.7,480.0 572.2,481.0 572.7,481.7 573.2,482.4 573.7,483.0 574.2,483.5 574.7,484.0 575.2,482.0 575.7,475.6 576.2,470.6 576.7,472.4 577.2,475.1 577.7,477.0 578.2,478.3 578.7,479.4 579.2,480.3 579.7,481.1 580.2,481.9 580.7,482.5 581.2,483.2 581.7,483.8 582.2,484.4 582.7,484.9 583.2,485.4 583.7,485.1 584.2,480.8 584.7,475.6 585.2,474.5 585.7,477.0 586.2,478.7 586.7,479.9 587.2,480.8 587.7,481.5 588.2,482.2 588.7,482.7 589.2,483.3 589.7,483.8 590.2,484.2 590.7,484.7 591.2,485.1 591.7,485.5 592.2,485.8 592.7,483.0 593.2,478.0 593.7,474.1 594.2,475.5 594.7,477.5 595.2,478.9 595.7,479.9 596.2,480.7 596.7,481.4 597.2,481.9 597.7,482.4 598.2,482.9 598.7,483.4 599.2,483.8 599.7,484.3 600.2,484.7 600.7,484.9 601.2,484.7 601.7,484.7 602.2,484.7 602.7,484.7 603.2,484.7 603.7,484.7 604.2,484.7 604.7,484.7 605.2,485.0 605.7,485.3 606.2,485.5 606.7,485.6 607.2,485.7 607.7,485.8 608.2,485.8 608.7,485.8 609.2,485.8 609.7,485.8 610.2,485.8 610.7,485.8 611.2,484.9 611.7,483.6 612.2,483.3 612.7,483.3 613.2,483.9 613.7,482.1 614.2,480.6 614.7,480.6 615.2,480.6 615.7,481.9 616.2,482.7 616.7,482.3 617.2,481.9 617.7,482.8 618.2,483.7 618.7,484.3 619.2,484.8 619.7,485.2 620.2,485.6 620.7,485.8 621.2,485.8 621.7,485.8 622.2,485.8 622.7,485.8 623.2,485.4 623.7,484.1 624.2,483.3 624.7,483.6 625.2,484.2 625.7,484.6 626.2,484.9 626.7,485.2 627.2,485.4 627.7,485.6 628.2,485.8 628.7,485.8 629.2,485.8 629.7,485.1 630.2,482.9 630.7,481.0 631.2,481.6 631.7,482.8 632.2,483.7 632.7,484.4 633.2,485.0 633.7,484.1 634.2,481.6 634.7,480.6 635.2,481.5 635.7,482.8 636.2,483.7 636.7,483.2 637.2,480.4 637.7,479.7 638.2,480.1 638.7,481.7 639.2,482.9 639.7,481.9 640.2,481.5 640.7,482.5 641.2,483.4 641.7,484.1 642.2,484.6 642.7,485.1 643.2,485.5 643.7,483.6 644.2,480.6 644.7,479.3 645.2,480.8 645.7,482.1 646.2,483.1 646.7,483.9 647.2,484.5 647.7,483.2 648.2,481.5 648.7,482.0 649.2,483.1 649.7,483.8 650.2,484.4 650.7,484.9 651.2,485.3 651.7,483.4 652.2,480.7 652.7,480.2 653.2,481.1 653.7,482.2 654.2,483.0 654.7,483.6 655.2,484.1 655.7,484.5 656.2,484.9 656.7,485.3 657.2,485.6 657.7,485.8 658.2,485.8 658.7,485.8 659.2,485.8 659.7,485.8 660.2,485.8 660.7,482.5 661.2,477.4 661.7,474.1 662.2,475.9 662.7,478.1 663.2,479.7 663.7,480.9 664.2,481.5 664.7,482.2 665.2,483.1 665.7,483.7 666.2,484.2 666.7,484.6 667.2,484.9 667.7,485.2 668.2,485.5 668.7,485.8 669.2,485.8 669.7,484.4 670.2,481.0 670.7,478.1 671.2,478.9 671.7,480.4 672.2,481.4 672.7,482.2 673.2,482.8 673.7,483.3 674.2,483.7 674.7,484.1 675.2,484.5 675.7,484.9 676.2,485.2 676.7,485.5 677.2,485.8 677.7,482.7 678.2,477.3 678.7,473.2 679.2,474.7 679.7,477.0 680.2,478.5 680.7,479.7 681.2,480.6 681.7,481.3 682.2,482.0 682.7,482.6 683.2,483.2 683.7,483.7 684.2,484.2 684.7,484.7 685.2,485.2 685.7,485.6 686.2,485.5 686.7,482.3 687.2,478.6 687.7,477.8 688.2,479.6 688.7,480.8 689.2,481.7 689.7,482.3 690.2,482.8 690.7,483.3 691.2,483.7 691.7,484.1 692.2,484.5 692.7,484.8 693.2,485.1 693.7,485.4 694.2,485.7 694.7,485.8 695.2,485.8 695.7,482.8 696.2,478.0 696.7,475.0 697.2,475.0 697.7,475.0 698.2,475.5 698.7,477.7 699.2,479.2 699.7,480.3 700.2,481.1 700.7,481.8 701.2,482.4 701.7,483.0 702.2,483.5 702.7,483.9 703.2,484.4 703.7,484.8 704.2,485.0 704.7,481.8 705.2,478.1 705.7,478.5 706.2,480.1 706.7,481.2 707.2,482.0 707.7,482.6 708.2,483.1 708.7,483.5 709.2,483.9 709.7,484.3 710.2,484.6 710.7,484.9 711.2,485.2 711.7,485.5 712.2,485.8 712.7,485.8 713.2,483.0 713.7,478.7 714.2,475.8 714.7,477.3 715.2,479.2 715.7,480.5 716.2,481.5 716.7,482.3 717.2,483.0 717.7,483.6 718.2,484.1 718.7,484.7 719.2,485.2 719.7,485.6 720.2,485.8 720.7,485.1 721.2,483.4 721.7,482.2 722.2,482.2 722.7,482.7 723.2,483.5 723.7,484.0 724.2,484.5 724.7,484.8 725.2,485.1 725.7,485.4 726.2,485.6 726.7,485.8 727.2,484.0 727.7,481.9 728.2,481.5 728.7,481.7 729.2,482.8 729.7,483.6 730.2,484.2 730.7,483.8 731.2,480.3 731.7,478.1 732.2,479.0 732.7,480.8 733.2,482.1 733.7,483.1 734.2,483.9 734.7,481.8 735.2,478.1 735.7,478.1 736.2,478.9 736.7,480.5 737.2,481.7 737.7,482.5 738.2,483.2 738.7,483.8 739.2,482.6 739.7,482.2 740.2,483.1 740.7,483.9 741.2,484.6 741.7,485.1 742.2,485.5 742.7,483.4 743.2,479.1 743.7,475.8 744.2,477.2 744.7,479.3 745.2,480.8 745.7,482.0 746.2,483.0 746.7,483.8 747.2,481.5 747.7,481.0 748.2,482.3 748.7,483.2 749.2,483.9 749.7,484.4 750.2,484.9 750.7,484.8 751.2,479.3 751.7,472.9 752.2,471.5 752.7,474.7 753.2,476.7 753.7,478.2 754.2,479.4 754.7,480.3 755.2,481.1 755.7,481.8 756.2,482.5 756.7,483.1 757.2,483.7 757.7,484.2 758.2,484.8 758.7,485.3 759.2,485.7 759.7,485.8 760.2,485.8 760.7,485.8 761.2,484.7 761.7,483.1 762.2,482.8 762.7,482.8 763.2,483.5 763.7,484.3 764.2,484.8 764.7,484.5 765.2,481.2 765.7,478.4 766.2,478.4 766.7,479.5 767.2,480.9 767.7,481.8 768.2,482.6 768.7,483.1 769.2,483.6 769.7,484.1 770.2,484.5 770.7,484.9 771.2,485.2 771.7,485.5 772.2,483.2 772.7,477.9 773.2,473.2 773.7,474.4 774.2,476.8 774.7,478.4 775.2,479.6 775.7,480.5 776.2,481.3 776.7,481.9 777.2,482.5 777.7,483.1 778.2,483.7 778.7,484.2 779.2,484.7 779.7,485.1 780.2,485.6 780.7,481.7 781.2,475.5 781.7,471.5 782.2,473.6 782.7,476.0 783.2,477.7 783.7,478.9 784.2,479.9 784.7,480.8 785.2,481.5 785.7,482.2 786.2,482.8 786.7,483.4 787.2,484.0 787.7,484.6 788.2,485.1 788.7,485.5 789.2,484.7 789.7,480.7 790.2,476.3 790.7,476.8 791.2,478.7 791.7,480.0 792.2,480.9 792.7,481.6 793.2,482.2 793.7,482.7 794.2,483.2 794.7,483.6 795.2,484.0 795.7,484.4 796.2,484.8 796.7,485.1 797.2,485.4 797.7,485.7 798.2,485.8 798.7,482.2 799.2,477.7 799.7,475.8 800.2,477.7 800.7,479.3 801.2,480.5 801.7,481.3 802.2,482.1 802.7,482.7 803.2,483.2 803.7,483.7 804.2,484.2 804.7,484.6 805.2,485.1 805.7,485.4 806.2,485.5 806.7,482.4 807.2,478.8 807.7,478.1 808.2,478.1 808.7,478.1 809.2,478.1 809.7,479.6 810.2,480.8 810.7,481.7 811.2,482.4 811.7,483.0 812.2,483.5 812.7,483.9 813.2,484.3 813.7,484.7 814.2,485.0 814.7,484.3 815.2,480.7 815.7,477.6 816.2,478.4 816.7,480.0 817.2,481.0 817.7,481.8 818.2,482.4 818.7,483.0 819.2,483.4 819.7,483.8 820.2,484.2 820.7,484.6 821.2,484.9 821.7,485.2 822.2,485.5 822.7,485.8 823.2,485.8 823.7,481.5 824.2,476.4 824.7,474.1 825.2,476.2 825.7,478.1 826.2,479.3 826.7,480.3 827.2,481.1 827.7,481.7 828.2,482.3 828.7,482.8 829.2,483.3 829.7,483.8 830.2,484.2 830.7,484.7 831.2,485.1 831.7,485.5 832.2,485.8 832.7,484.6 833.2,478.5 833.7,471.3 834.2,469.8 834.7,472.9 835.2,472.9 835.7,472.9 836.2,473.6 836.7,476.2 837.2,478.0 837.7,479.3 838.2,480.3 838.7,481.2 839.2,481.9 839.7,482.6 840.2,483.2 840.7,483.8 841.2,484.4 841.7,477.6 842.2,469.7 842.7,468.0 843.2,471.9 843.7,474.4 844.2,476.3 844.7,477.7 845.2,478.8 845.7,479.8 846.2,480.7 846.7,481.5 847.2,482.3 847.7,483.0 848.2,483.7 848.7,484.4 849.2,485.0 849.7,482.4 850.2,475.7 850.7,469.8 851.2,471.3 851.7,474.3 852.2,476.3 852.7,477.8 853.2,478.9 853.7,479.9 854.2,480.8 854.7,481.5 855.2,482.3 855.7,483.0 856.2,483.6 856.7,484.2 857.2,484.8 857.7,485.3 858.2,485.8 858.7,480.3 859.2,472.4 859.7,467.3 860.2,470.2 860.7,473.5 861.2,475.5 861.7,476.8 862.2,472.2 862.7,470.8 863.2,475.3 863.7,478.6 864.2,475.2 864.7,471.1 865.2,473.6 865.7,476.8 866.2,476.0 866.7,475.0 867.2,475.0 867.7,476.7 868.2,478.2 868.7,479.2 869.2,479.8 869.7,480.3 870.2,480.7 870.7,481.0 871.2,481.3 871.7,481.6 872.2,481.9 872.7,482.1 873.2,482.4 873.7,482.7 874.2,482.9 874.7,483.1 875.2,483.3 875.7,483.5 876.2,483.7 876.7,483.8 877.2,484.0 877.7,484.2 878.2,484.3 878.7,484.5 879.2,484.6 879.7,484.8 880.2,484.9 880.7,485.1 881.2,485.2 881.7,485.3 882.2,485.5 882.7,485.6 883.2,485.7 883.7,485.8 884.2,485.8 884.7,485.8 885.2,485.8 885.7,485.8 886.2,483.5 886.7,477.1 887.2,469.8 887.7,471.0 888.2,476.2 888.7,480.2 889.2,483.1 889.7,482.8 890.2,482.6 890.7,481.5 891.2,480.7 891.7,479.4 892.2,480.1 892.7,482.5 893.2,482.2 893.7,481.7 894.2,481.9 894.7,482.3 895.2,482.2 895.7,482.2 896.2,477.6 896.7,472.8 897.2,477.6 897.7,481.5 898.2,481.7 898.7,482.1 899.2,481.8 899.7,478.7 900.2,482.2 900.7,480.4 901.2,479.3 901.7,481.9 902.2,482.4 902.7,480.1 903.2,476.6 903.7,480.1 904.2,482.6 904.7,481.0 905.2,480.5 905.7,480.3 906.2,480.1 906.7,479.8 907.2,481.0 907.7,478.0 908.2,479.8 908.7,482.2 909.2,481.9 909.7,482.5 910.2,480.3 910.7,480.1 911.2,479.7 911.7,478.1 912.2,473.5 912.7,478.1 913.2,481.7 913.7,482.0 914.2,480.9 914.7,477.4 915.2,482.2 915.7,478.0 916.2,477.5 916.7,480.7 917.2,481.1 917.7,481.6 918.2,479.5 918.7,479.0 919.2,474.8 919.7,479.0 920.2,478.2 920.7,481.1 921.2,482.1 921.7,477.6 922.2,472.8 922.7,477.6 923.2,481.6 923.7,482.6 924.2,482.0 924.7,482.3 925.2,481.6 925.7,482.1 926.2,479.7 926.7,479.7 927.2,479.3 927.7,475.4 928.2,479.3 928.7,481.2 929.2,482.5 929.7,481.4 930.2,480.1 930.7,478.0 931.2,478.0 931.7,481.0 932.2,479.8 932.7,481.6 933.2,480.5 933.7,482.6 934.2,481.6 934.7,482.1 935.2,480.7 935.7,477.5 936.2,480.7 936.7,482.6 937.2,481.5 937.7,479.5 938.2,482.2 938.7,482.0 939.2,481.0 939.7,481.3 940.2,478.5 940.7,481.3 941.2,479.6 941.7,480.2 942.2,481.7 942.7,478.1 943.2,477.6 943.7,481.0 944.2,478.0 944.7,481.0 945.2,482.2 945.7,481.4 946.2,482.2 946.7,481.9 947.2,478.1 947.7,480.7 948.2,477.5 948.7,480.7 949.2,480.3 949.7,482.5 950.2,482.0 950.7,481.7 951.2,481.8 951.7,476.1 952.2,470.3 952.7,476.1 953.2,481.8 953.7,481.9 954.2,482.1 954.7,481.7 955.2,482.5 955.7,482.3 956.2,482.3 956.7,479.3 957.2,475.4 957.7,479.3 958.2,482.6 958.7,479.7 959.2,482.2 959.7,480.3 960.2,482.7 960.7,479.2 961.2,478.5 961.7,478.5 962.2,482.2 962.7,480.4 963.2,481.1 963.7,482.9 964.2,480.9 964.7,481.3 965.2,478.5 965.7,480.4 966.2,482.8 966.7,482.6 967.2,483.2 967.7,482.5 968.2,480.5 968.7,477.3 969.2,480.5 969.7,483.3 970.2,483.0 970.7,483.0 971.2,481.3 971.7,481.7 972.2,479.0 972.7,481.7 973.2,483.2 973.7,483.3 974.2,483.2 974.7,480.4 975.2,483.5 975.7,482.0 976.2,479.6 976.7,482.0 977.2,484.0 977.7,483.4 978.2,481.5 978.7,483.7 979.2,483.2 979.7,482.2 980.2,480.6 980.7,482.7 981.2,484.2 981.7,483.9 982.2,484.4 982.7,483.9 983.2,484.3 983.7,483.5 984.2,483.8 984.7,484.4 985.2,484.1 985.7,483.4 986.2,483.9 986.7,485.0 987.2,484.9 987.7,485.0 988.2,485.0 988.7,485.5 989.2,485.5 989.7,485.7 990.2,485.7 990.7,485.8 991.2,485.8 991.7,485.8 992.2,485.8 992.2,486.9 991.7,486.9 991.2,486.9 990.7,487.0 990.2,487.0 989.7,487.2 989.2,487.3 988.7,487.6 988.2,488.7 987.7,487.7 987.2,487.7 986.7,488.2 986.2,488.4 985.7,488.4 985.2,488.8 984.7,490.1 984.2,488.6 983.7,488.7 983.2,488.6 982.7,489.8 982.2,488.7 981.7,488.6 981.2,489.9 980.7,490.1 980.2,492.2 979.7,490.1 979.2,489.7 978.7,488.9 978.2,489.4 977.7,488.8 977.2,489.1 976.7,490.8 976.2,493.2 975.7,490.8 975.2,489.3 974.7,489.5 974.2,489.0 973.7,491.2 973.2,490.2 972.7,490.8 972.2,493.2 971.7,490.8 971.2,491.1 970.7,489.9 970.2,489.9 969.7,489.7 969.2,492.7 968.7,496.3 968.2,492.7 967.7,493.6 967.2,490.2 966.7,489.9 966.2,489.9 965.7,491.1 965.2,493.8 964.7,491.1 964.2,490.2 963.7,489.9 963.2,490.4 962.7,490.3 962.2,490.1 961.7,491.5 961.2,494.3 960.7,491.5 960.2,490.0 959.7,490.9 959.2,490.6 958.7,491.1 958.2,492.5 957.7,491.9 957.2,495.0 956.7,491.9 956.2,490.8 955.7,491.2 955.2,491.4 954.7,490.3 954.2,490.9 953.7,491.4 953.2,490.8 952.7,493.6 952.2,497.5 951.7,495.5 951.2,492.4 950.7,492.0 950.2,490.8 949.7,491.3 949.2,490.4 948.7,491.8 948.2,494.8 947.7,493.8 947.2,493.4 946.7,490.6 946.2,490.9 945.7,491.0 945.2,490.9 944.7,491.5 944.2,494.3 943.7,491.5 943.2,491.1 942.7,493.7 942.2,491.0 941.7,490.2 941.2,492.7 940.7,493.6 940.2,497.5 939.7,493.6 939.2,493.7 938.7,490.8 938.2,491.0 937.7,491.3 937.2,490.6 936.7,490.8 936.2,491.5 935.7,494.3 935.2,491.5 934.7,492.2 934.2,490.2 933.7,491.0 933.2,494.7 932.7,492.5 932.2,490.5 931.7,491.8 931.2,494.8 930.7,491.8 930.2,492.0 929.7,490.9 929.2,490.6 928.7,491.2 928.2,492.7 927.7,496.3 927.2,492.7 926.7,490.4 926.2,491.1 925.7,490.8 925.2,492.1 924.7,490.5 924.2,490.6 923.7,491.2 923.2,492.0 922.7,493.6 922.2,497.5 921.7,495.4 921.2,490.6 920.7,491.3 920.2,490.4 919.7,492.7 919.2,496.3 918.7,492.7 918.2,493.0 917.7,490.9 917.2,490.9 916.7,491.5 916.2,494.3 915.7,492.5 915.2,490.5 914.7,490.6 914.2,491.2 913.7,494.1 913.2,490.9 912.7,491.9 912.2,495.0 911.7,491.9 911.2,491.4 910.7,491.2 910.2,490.2 909.7,490.8 909.2,491.5 908.7,491.3 908.2,491.7 907.7,493.8 907.2,491.1 906.7,492.0 906.2,490.8 905.7,491.1 905.2,490.4 904.7,490.7 904.2,491.2 903.7,494.4 903.2,498.8 902.7,494.4 902.2,491.1 901.7,490.8 901.2,493.7 900.7,493.3 900.2,490.6 899.7,491.7 899.2,491.0 898.7,490.8 898.2,490.3 897.7,491.5 897.2,497.9 896.7,504.2 896.2,497.9 895.7,491.5 895.2,490.6 894.7,491.5 894.2,493.8 893.7,490.7 893.2,490.3 892.7,491.1 892.2,491.0 891.7,491.8 891.2,491.2 890.7,496.6 890.2,491.0 889.7,493.0 889.2,489.6 888.7,492.9 888.2,497.0 887.7,502.5 887.2,503.8 886.7,496.1 886.2,489.4 885.7,486.9 885.2,486.9 884.7,486.9 884.2,486.9 883.7,486.9 883.2,487.0 882.7,487.1 882.2,487.2 881.7,487.3 881.2,487.5 880.7,487.6 880.2,487.7 879.7,487.8 879.2,488.0 878.7,488.1 878.2,488.3 877.7,488.4 877.2,488.5 876.7,488.7 876.2,488.8 875.7,489.0 875.2,489.2 874.7,489.4 874.2,489.6 873.7,489.8 873.2,490.0 872.7,490.3 872.2,490.5 871.7,490.7 871.2,491.0 870.7,491.3 870.2,491.6 869.7,491.9 869.2,492.4 868.7,493.0 868.2,493.9 867.7,495.2 867.2,496.8 866.7,496.8 866.2,495.8 865.7,493.6 865.2,495.9 864.7,497.8 864.2,494.8 863.7,493.1 863.2,496.0 862.7,499.9 862.2,498.7 861.7,495.1 861.2,497.4 860.7,500.4 860.2,504.4 859.7,507.7 859.2,502.0 858.7,493.2 858.2,487.1 857.7,487.7 857.2,488.4 856.7,489.1 856.2,489.9 855.7,490.7 855.2,491.5 854.7,492.4 854.2,493.4 853.7,494.4 853.2,495.6 852.7,497.1 852.2,498.9 851.7,501.4 851.2,505.0 850.7,507.0 850.2,499.6 849.7,491.4 849.2,487.6 848.7,488.1 848.2,488.6 847.7,489.2 847.2,489.8 846.7,490.5 846.2,491.2 845.7,491.9 845.2,492.7 844.7,493.7 844.2,494.9 843.7,496.4 843.2,498.6 842.7,501.8 842.2,500.4 841.7,493.7 841.2,488.3 840.7,488.8 840.2,489.3 839.7,489.9 839.2,490.5 838.7,491.2 838.2,492.0 837.7,492.9 837.2,494.1 836.7,495.8 836.2,498.3 835.7,498.9 835.2,499.2 834.7,503.4 834.2,509.3 833.7,507.2 833.2,497.3 832.7,488.8 832.2,487.3 831.7,487.8 831.2,488.3 830.7,488.9 830.2,489.5 829.7,490.2 829.2,490.9 828.7,491.6 828.2,492.3 827.7,493.2 827.2,494.1 826.7,495.2 826.2,496.6 825.7,498.4 825.2,501.0 824.7,504.1 824.2,500.9 823.7,493.4 823.2,487.2 822.7,487.1 822.2,487.5 821.7,487.9 821.2,488.3 820.7,488.7 820.2,489.2 819.7,489.6 819.2,490.2 818.7,490.7 818.2,491.4 817.7,492.2 817.2,493.1 816.7,494.5 816.2,496.5 815.7,497.5 815.2,493.6 814.7,489.1 814.2,487.9 813.7,488.3 813.2,488.7 812.7,489.1 812.2,489.5 811.7,490.1 811.2,490.7 810.7,491.4 810.2,492.4 809.7,493.8 809.2,495.3 808.7,495.3 808.2,495.3 807.7,495.3 807.2,494.5 806.7,490.7 806.2,487.3 805.7,487.6 805.2,488.0 804.7,488.5 804.2,489.1 803.7,489.6 803.2,490.2 802.7,490.9 802.2,491.6 801.7,492.5 801.2,493.6 800.7,494.9 800.2,496.9 799.7,499.2 799.2,496.9 798.7,491.5 798.2,487.0 797.7,487.5 797.2,488.0 796.7,488.6 796.2,489.2 795.7,489.8 795.2,490.5 794.7,491.1 794.2,491.9 793.7,492.6 793.2,493.5 792.7,494.5 792.2,495.7 791.7,497.3 791.2,499.5 790.7,502.7 790.2,503.6 789.7,496.0 789.2,489.4 788.7,487.1 788.2,487.5 787.7,488.0 787.2,488.5 786.7,488.9 786.2,489.5 785.7,490.0 785.2,490.6 784.7,491.2 784.2,492.0 783.7,492.8 783.2,493.9 782.7,495.4 782.2,497.4 781.7,499.2 781.2,495.7 780.7,490.5 780.2,487.3 779.7,487.7 779.2,488.2 778.7,488.7 778.2,489.2 777.7,489.8 777.2,490.4 776.7,491.0 776.2,491.7 775.7,492.5 775.2,493.5 774.7,494.7 774.2,496.4 773.7,498.8 773.2,500.1 772.7,495.2 772.2,489.7 771.7,487.3 771.2,487.7 770.7,488.0 770.2,488.4 769.7,488.9 769.2,489.3 768.7,489.9 768.2,490.5 767.7,491.3 767.2,492.3 766.7,493.7 766.2,494.9 765.7,494.9 765.2,491.9 764.7,488.5 764.2,487.8 763.7,488.2 763.2,488.9 762.7,489.5 762.2,489.5 761.7,489.2 761.2,487.9 760.7,486.9 760.2,486.9 759.7,486.9 759.2,487.2 758.7,487.8 758.2,488.4 757.7,489.0 757.2,489.7 756.7,490.4 756.2,491.2 755.7,492.0 755.2,492.8 754.7,493.8 754.2,494.9 753.7,496.3 753.2,498.1 752.7,500.6 752.2,504.4 751.7,502.7 751.2,495.0 750.7,488.3 750.2,488.6 749.7,489.2 749.2,490.0 748.7,490.9 748.2,492.2 747.7,494.0 747.2,493.3 746.7,490.0 746.2,489.2 745.7,489.9 745.2,490.9 744.7,492.1 744.2,493.8 743.7,494.9 743.2,492.3 742.7,488.8 742.2,487.3 741.7,487.7 741.2,488.2 740.7,488.9 740.2,489.7 739.7,490.6 739.2,490.2 738.7,488.8 738.2,489.3 737.7,489.9 737.2,490.7 736.7,491.8 736.2,493.2 735.7,494.0 735.2,494.0 734.7,490.6 734.2,489.8 733.7,491.0 733.2,492.4 732.7,494.1 732.2,496.6 731.7,497.8 731.2,494.8 730.7,490.0 730.2,489.1 729.7,489.8 729.2,490.7 728.7,492.0 728.2,492.3 727.7,491.8 727.2,489.2 726.7,487.0 726.2,486.9 725.7,487.0 725.2,487.1 724.7,487.3 724.2,487.5 723.7,487.8 723.2,488.1 722.7,488.5 722.2,488.8 721.7,488.8 721.2,488.1 720.7,487.2 720.2,487.0 719.7,487.6 719.2,488.3 718.7,489.1 718.2,489.9 717.7,490.7 717.2,491.7 716.7,492.7 716.2,494.0 715.7,495.5 715.2,497.5 714.7,500.4 714.2,502.7 713.7,498.3 713.2,491.6 712.7,486.9 712.2,487.0 711.7,487.2 711.2,487.5 710.7,487.8 710.2,488.1 709.7,488.5 709.2,488.8 708.7,489.2 708.2,489.6 707.7,490.1 707.2,490.7 706.7,491.5 706.2,492.5 705.7,494.1 705.2,494.5 704.7,490.9 704.2,487.8 703.7,487.9 703.2,488.3 702.7,488.7 702.2,489.1 701.7,489.6 701.2,490.1 700.7,490.7 700.2,491.3 699.7,492.1 699.2,493.1 698.7,494.5 698.2,496.5 697.7,497.1 697.2,497.1 696.7,497.1 696.2,494.2 695.7,489.8 695.2,486.9 694.7,486.9 694.2,486.9 693.7,487.1 693.2,487.4 692.7,487.6 692.2,487.9 691.7,488.2 691.2,488.5 690.7,488.8 690.2,489.2 689.7,489.6 689.2,490.1 688.7,490.8 688.2,491.7 687.7,493.2 687.2,492.5 686.7,489.6 686.2,487.1 685.7,487.8 685.2,488.6 684.7,489.4 684.2,490.2 683.7,491.1 683.2,492.1 682.7,493.1 682.2,494.1 681.7,495.3 681.2,496.6 680.7,498.2 680.2,500.2 679.7,502.9 679.2,506.9 678.7,509.6 678.2,502.3 677.7,492.9 677.2,487.1 676.7,487.5 676.2,487.9 675.7,488.3 675.2,488.7 674.7,489.2 674.2,489.7 673.7,490.2 673.2,490.8 672.7,491.6 672.2,492.5 671.7,493.8 671.2,495.6 670.7,496.6 670.2,493.0 669.7,488.9 669.2,486.9 668.7,486.9 668.2,487.2 667.7,487.4 667.2,487.6 666.7,487.9 666.2,488.3 665.7,488.7 665.2,489.2 664.7,490.0 664.2,490.8 663.7,491.8 663.2,492.9 662.7,494.5 662.2,496.6 661.7,498.4 661.2,495.1 660.7,490.2 660.2,486.9 659.7,486.9 659.2,486.9 658.7,486.9 658.2,486.9 657.7,486.9 657.2,487.1 656.7,487.3 656.2,487.6 655.7,487.9 655.2,488.2 654.7,488.6 654.2,489.1 653.7,489.8 653.2,490.7 652.7,491.4 652.2,490.9 651.7,488.8 651.2,487.7 650.7,488.2 650.2,488.8 649.7,489.5 649.2,490.4 648.7,491.7 648.2,492.3 647.7,490.2 647.2,490.0 646.7,491.3 646.2,492.8 645.7,494.8 645.2,497.3 644.7,500.1 644.2,497.6 643.7,491.8 643.2,487.2 642.7,487.5 642.2,487.9 641.7,488.4 641.2,488.9 640.7,489.7 640.2,490.6 639.7,490.2 639.2,488.8 638.7,489.6 638.2,490.7 637.7,491.0 637.2,490.6 636.7,488.6 636.2,488.0 635.7,488.5 635.2,489.2 634.7,489.7 634.2,489.1 633.7,487.7 633.2,488.0 632.7,488.7 632.2,489.5 631.7,490.5 631.2,491.9 630.7,492.6 630.2,490.4 629.7,487.9 629.2,486.9 628.7,486.9 628.2,486.9 627.7,486.9 627.2,486.9 626.7,487.0 626.2,487.1 625.7,487.3 625.2,487.5 624.7,487.8 624.2,488.0 623.7,487.5 623.2,486.9 622.7,486.9 622.2,486.9 621.7,486.9 621.2,486.9 620.7,486.9 620.2,487.2 619.7,487.5 619.2,487.9 618.7,488.4 618.2,488.9 617.7,489.7 617.2,490.6 616.7,490.2 616.2,490.3 615.7,491.3 615.2,492.6 614.7,492.6 614.2,492.6 613.7,491.0 613.2,488.9 612.7,489.5 612.2,489.5 611.7,489.2 611.2,487.9 610.7,486.9 610.2,486.9 609.7,486.9 609.2,486.9 608.7,486.9 608.2,486.9 607.7,487.0 607.2,487.1 606.7,487.2 606.2,487.3 605.7,487.5 605.2,487.8 604.7,488.1 604.2,488.1 603.7,488.1 603.2,488.1 602.7,488.1 602.2,488.1 601.7,488.1 601.2,488.1 600.7,487.9 600.2,488.3 599.7,488.8 599.2,489.3 598.7,489.8 598.2,490.3 597.7,490.8 597.2,491.4 596.7,492.0 596.2,492.8 595.7,493.6 595.2,494.8 594.7,496.3 594.2,498.6 593.7,500.1 593.2,495.8 592.7,490.2 592.2,487.0 591.7,487.4 591.2,487.8 590.7,488.2 590.2,488.7 589.7,489.2 589.2,489.7 588.7,490.2 588.2,490.8 587.7,491.5 587.2,492.3 586.7,493.2 586.2,494.4 585.7,496.2 585.2,498.8 584.7,497.6 584.2,492.3 583.7,487.7 583.2,487.6 582.7,488.2 582.2,488.9 581.7,489.6 581.2,490.3 580.7,491.1 580.2,492.0 579.7,492.8 579.2,493.8 578.7,494.9 578.2,496.3 577.7,497.9 577.2,500.2 576.7,503.5 576.2,505.7 575.7,499.7 575.2,491.8 574.7,488.6 574.2,489.0 573.7,489.5 573.2,490.1 572.7,490.7 572.2,491.4 571.7,492.2 571.2,493.3 570.7,495.0 570.2,496.8 569.7,496.8 569.2,496.8 568.7,497.2 568.2,500.9 567.7,501.8 567.2,495.0 566.7,489.0 566.2,486.9 565.7,486.9 565.2,487.2 564.7,487.6 564.2,488.0 563.7,488.5 563.2,489.0 562.7,489.5 562.2,490.0 561.7,490.6 561.2,491.2 560.7,491.9 560.2,492.8 559.7,493.9 559.2,495.4 558.7,497.6 558.2,498.8 557.7,494.4 557.2,489.4 556.7,487.2 556.2,487.5 555.7,487.9 555.2,488.4 554.7,488.8 554.2,489.3 553.7,489.8 553.2,490.3 552.7,491.0 552.2,491.7 551.7,492.7 551.2,494.1 550.7,496.1 550.2,496.6 549.7,492.1 549.2,488.2 548.7,487.0 548.2,487.4 547.7,487.7 547.2,488.1 546.7,488.5 546.2,489.0 545.7,489.4 545.2,489.9 544.7,490.4 544.2,491.0 543.7,491.8 543.2,492.7 542.7,493.9 542.2,495.6 541.7,497.1 541.2,494.2 540.7,489.8 540.2,487.2 539.7,487.7 539.2,488.2 538.7,488.7 538.2,489.2 537.7,489.8 537.2,490.4 536.7,491.1 536.2,491.9 535.7,492.8 535.2,493.9 534.7,495.5 534.2,497.7 533.7,499.2 533.2,495.2 532.7,490.0 532.2,486.9 531.7,486.9 531.2,486.9 530.7,486.9 530.2,487.0 529.7,487.3 529.2,487.6 528.7,487.9 528.2,488.3 527.7,488.7 527.2,489.2 526.7,489.7 526.2,490.3 525.7,491.0 525.2,492.0 524.7,493.3 524.2,494.5 523.7,492.3 523.2,489.0 522.7,486.9 522.2,487.0 521.7,487.4 521.2,487.9 520.7,488.3 520.2,488.8 519.7,489.4 519.2,489.9 518.7,490.5 518.2,491.1 517.7,491.9 517.2,492.7 516.7,493.7 516.2,495.0 515.7,496.9 515.2,499.7 514.7,498.4 514.2,492.7 513.7,487.8 513.2,486.9 512.7,486.9 512.2,487.2 511.7,487.4 511.2,487.7 510.7,488.0 510.2,488.3 509.7,488.7 509.2,489.0 508.7,489.4 508.2,489.9 507.7,490.4 507.2,491.1 506.7,492.1 506.2,493.5 505.7,494.2 505.2,491.4 504.7,488.3 504.2,487.3 503.7,487.8 503.2,488.3 502.7,488.9 502.2,489.5 501.7,490.1 501.2,490.8 500.7,491.6 500.2,492.5 499.7,493.7 499.2,495.3 498.7,497.6 498.2,498.8 497.7,494.4 497.2,490.0 496.7,490.6 496.2,490.6 495.7,489.4 495.2,487.7 494.7,486.9 494.2,486.9 493.7,487.4 493.2,487.9 492.7,488.5 492.2,489.2 491.7,489.8 491.2,490.5 490.7,491.3 490.2,492.0 489.7,492.9 489.2,493.9 488.7,495.0 488.2,496.5 487.7,498.4 487.2,501.2 486.7,503.6 486.2,498.9 485.7,491.9 485.2,486.9 484.7,487.0 484.2,487.5 483.7,488.0 483.2,488.6 482.7,489.3 482.2,490.0 481.7,490.8 481.2,491.6 480.7,492.7 480.2,494.0 479.7,495.6 479.2,498.0 478.7,499.7 478.2,495.5 477.7,490.1 477.2,487.0 476.7,487.2 476.2,487.5 475.7,487.9 475.2,488.3 474.7,488.8 474.2,489.4 473.7,490.3 473.2,490.6 472.7,490.2 472.2,488.4 471.7,488.9 471.2,489.7 470.7,490.6 470.2,490.6 469.7,489.4 469.2,490.0 468.7,490.0 468.2,489.4 467.7,487.8 467.2,486.9 466.7,487.0 466.2,487.2 465.7,487.4 465.2,487.6 464.7,487.8 464.2,488.0 463.7,488.3 463.2,488.6 462.7,488.9 462.2,489.3 461.7,489.8 461.2,490.5 460.7,491.6 460.2,491.9 459.7,491.4 459.2,489.0 458.7,487.0 458.2,487.1 457.7,487.5 457.2,488.0 456.7,488.5 456.2,489.1 455.7,489.7 455.2,490.4 454.7,491.2 454.2,492.2 453.7,493.4 453.2,495.1 452.7,497.5 452.2,496.5 451.7,491.7 451.2,487.6 450.7,486.9 450.2,486.9 449.7,487.0 449.2,487.2 448.7,487.4 448.2,487.6 447.7,487.8 447.2,488.0 446.7,488.3 446.2,488.6 445.7,488.9 445.2,489.3 444.7,489.8 444.2,490.5 443.7,491.6 443.2,491.9 442.7,489.9 442.2,487.7 441.7,486.9 441.2,487.3 440.7,487.7 440.2,488.1 439.7,488.5 439.2,489.0 438.7,489.5 438.2,490.0 437.7,490.6 437.2,491.3 436.7,492.2 436.2,493.3 435.7,494.8 435.2,497.1 434.7,496.1 434.2,491.5 433.7,487.5 433.2,486.9 432.7,486.9 432.2,486.9 431.7,487.2 431.2,487.4 430.7,487.7 430.2,488.0 429.7,488.3 429.2,488.7 428.7,489.1 428.2,489.5 427.7,490.0 427.2,490.7 426.7,491.6 426.2,492.9 425.7,493.6 425.2,491.0 424.7,488.1 424.2,486.9 423.7,486.9 423.2,486.9 422.7,487.0 422.2,487.5 421.7,488.2 421.2,488.8 420.7,489.6 420.2,490.3 419.7,491.2 419.2,492.2 418.7,493.3 418.2,494.7 417.7,496.5 417.2,499.1 416.7,501.3 416.2,497.3 415.7,491.1 415.2,486.9 414.7,487.2 414.2,487.5 413.7,487.9 413.2,488.3 412.7,488.7 412.2,489.1 411.7,489.6 411.2,490.1 410.7,490.7 410.2,491.5 409.7,492.4 409.2,493.8 408.7,495.8 408.2,495.8 407.7,494.1 407.2,490.1 406.7,488.1 406.2,488.6 405.7,489.0 405.2,489.6 404.7,490.2 404.2,491.0 403.7,492.0 403.2,493.3 402.7,495.2 402.2,495.2 401.7,495.2 401.2,495.2 400.7,495.2 400.2,494.7 399.7,498.1 399.2,498.9 398.7,494.4 398.2,489.4 397.7,486.9 397.2,486.9 396.7,486.9 396.2,487.0 395.7,487.2 395.2,487.5 394.7,487.8 394.2,488.0 393.7,488.3 393.2,488.7 392.7,489.0 392.2,489.4 391.7,489.8 391.2,490.4 390.7,491.2 390.2,492.2 389.7,493.5 389.2,492.2 388.7,489.2 388.2,486.9 387.7,486.9 387.2,486.9 386.7,487.1 386.2,487.5 385.7,488.0 385.2,488.5 384.7,489.1 384.2,489.7 383.7,490.3 383.2,491.1 382.7,492.1 382.2,493.3 381.7,494.9 381.2,497.3 380.7,496.3 380.2,491.6 379.7,487.6 379.2,486.9 378.7,487.1 378.2,487.5 377.7,487.9 377.2,488.3 376.7,488.7 376.2,489.1 375.7,489.6 375.2,490.2 374.7,490.8 374.2,491.5 373.7,492.5 373.2,493.8 372.7,495.7 372.2,496.2 371.7,491.9 371.2,488.1 370.7,487.0 370.2,487.3 369.7,487.6 369.2,488.0 368.7,488.4 368.2,488.9 367.7,489.3 367.2,489.8 366.7,490.4 366.2,491.1 365.7,491.9 365.2,492.9 364.7,494.4 364.2,496.2 363.7,494.4 363.2,490.3 362.7,486.9 362.2,486.9 361.7,487.0 361.2,487.2 360.7,487.5 360.2,487.8 359.7,487.8 359.2,487.8 358.7,487.8 358.2,487.8 357.7,487.6 357.2,487.9 356.7,488.4 356.2,489.0 355.7,489.8 355.2,490.9 354.7,491.2 354.2,491.2 353.7,491.2 353.2,489.9 352.7,487.9 352.2,486.9"/></svg>

<svg style="left:982px;top:89px" width="8" height="8" viewBox="0 0 8 8"><rect width="8" height="8" fill="#c8c8c8"/><path d="M0 0l8 8H0z" fill="#555"/></svg>
<div class="a" style="left:997px;top:87px;width:47px;height:533px;background:#262626;border-right:1px solid #151515;border-left:1px solid #151515"></div>
<div class="a" style="left:278px;top:352.700px;width:719px;height:1px;background:#cfcfd6"></div><div class="a" style="left:998px;top:352.700px;width:46px;height:1px;background:#131313"></div>
<div class="db" style="top:88.8px">dB</div>
<div class="db" style="top:98.6px">-1</div>
<div class="a" style="left:998px;top:102.1px;width:3px;height:1px;background:#777"></div>
<div class="db" style="top:122.5px">-3</div>
<div class="a" style="left:998px;top:126.0px;width:3px;height:1px;background:#777"></div>
<div class="db" style="top:149.5px">-6</div>
<div class="a" style="left:998px;top:153.0px;width:3px;height:1px;background:#777"></div>
<div class="db" style="top:169.2px">-9</div>
<div class="a" style="left:998px;top:172.7px;width:3px;height:1px;background:#777"></div>
<div class="db" style="top:183.0px">-12</div>
<div class="a" style="left:998px;top:186.5px;width:3px;height:1px;background:#777"></div>
<div class="db" style="top:192.4px">-15</div>
<div class="a" style="left:998px;top:195.9px;width:3px;height:1px;background:#777"></div>
<div class="db" style="top:204.9px">-21</div>
<div class="a" style="left:998px;top:208.4px;width:3px;height:1px;background:#777"></div>
<div class="db" style="top:216.2px">-<span style="font-size:9px">∞</span></div>
<div class="db" style="top:228.5px">-21</div>
<div class="a" style="left:998px;top:232.0px;width:3px;height:1px;background:#777"></div>
<div class="db" style="top:240.0px">-15</div>
<div class="a" style="left:998px;top:243.5px;width:3px;height:1px;background:#777"></div>
<div class="db" style="top:249.7px">-12</div>
<div class="a" style="left:998px;top:253.2px;width:3px;height:1px;background:#777"></div>
<div class="db" style="top:263.0px">-9</div>
<div class="a" style="left:998px;top:266.5px;width:3px;height:1px;background:#777"></div>
<div class="db" style="top:283.4px">-6</div>
<div class="a" style="left:998px;top:286.9px;width:3px;height:1px;background:#777"></div>
<div class="db" style="top:309.7px">-3</div>
<div class="a" style="left:998px;top:313.2px;width:3px;height:1px;background:#777"></div>
<div class="db" style="top:334.5px">-1</div>
<div class="a" style="left:998px;top:338.0px;width:3px;height:1px;background:#777"></div>
<div class="db" style="top:354.5px">dB</div>
<div class="db" style="top:364.0px">-1</div>
<div class="a" style="left:998px;top:367.5px;width:3px;height:1px;background:#777"></div>
<div class="db" style="top:388.6px">-3</div>
<div class="a" style="left:998px;top:392.1px;width:3px;height:1px;background:#777"></div>
<div class="db" style="top:415.6px">-6</div>
<div class="a" style="left:998px;top:419.1px;width:3px;height:1px;background:#777"></div>
<div class="db" style="top:435.2px">-9</div>
<div class="a" style="left:998px;top:438.7px;width:3px;height:1px;background:#777"></div>
<div class="db" style="top:449.7px">-12</div>
<div class="a" style="left:998px;top:453.2px;width:3px;height:1px;background:#777"></div>
<div class="db" style="top:459.0px">-15</div>
<div class="a" style="left:998px;top:462.5px;width:3px;height:1px;background:#777"></div>
<div class="db" style="top:470.8px">-21</div>
<div class="a" style="left:998px;top:474.3px;width:3px;height:1px;background:#777"></div>
<div class="db" style="top:482.4px">-<span style="font-size:9px">∞</span></div>
<div class="db" style="top:494.0px">-21</div>
<div class="a" style="left:998px;top:497.5px;width:3px;height:1px;background:#777"></div>
<div class="db" style="top:506.0px">-15</div>
<div class="a" style="left:998px;top:509.5px;width:3px;height:1px;background:#777"></div>
<div class="db" style="top:515.0px">-12</div>
<div class="a" style="left:998px;top:518.5px;width:3px;height:1px;background:#777"></div>
<div class="db" style="top:529.0px">-9</div>
<div class="a" style="left:998px;top:532.5px;width:3px;height:1px;background:#777"></div>
<div class="db" style="top:549.0px">-6</div>
<div class="a" style="left:998px;top:552.5px;width:3px;height:1px;background:#777"></div>
<div class="db" style="top:576.0px">-3</div>
<div class="a" style="left:998px;top:579.5px;width:3px;height:1px;background:#777"></div>
<div class="db" style="top:600.4px">-1</div>
<div class="a" style="left:998px;top:603.9px;width:3px;height:1px;background:#777"></div>

<div class="a" style="left:1031px;top:216px;width:10px;height:9px;background:#161616"></div><div class="t" style="left:1034px;top:216px;font-size:5.500px;color:#bbb;line-height:9px">L</div>
<div class="a" style="left:1031px;top:482px;width:10px;height:9px;background:#16244d"></div><div class="t" style="left:1034px;top:482px;font-size:5.500px;color:#9ab;line-height:9px">R</div>
<!-- hscroll -->
<div class="a" style="left:278px;top:619.300px;width:766px;height:7.500px;background:#151515"></div><div class="a" style="left:278px;top:620.700px;width:766px;height:5px;background:#313131"></div>
<div class="a" style="left:654px;top:621.800px;width:14px;height:3px;background:#444;border-radius:2px"></div>
<!-- HUD -->
<div class="a" style="left:546px;top:151px;width:78px;height:17px;background:#484848;border:1px solid #2e2e2e"></div>
<svg style="left:552px;top:154px" width="11" height="10" viewBox="0 0 11 10"><path d="M0 10L10 0v10z" fill="#7d7d7d"/><path d="M3.300 5v5M6.600 2v8" stroke="#4b4b4b" stroke-width=".8"/></svg>
<svg style="left:565px;top:153px" width="13" height="13" viewBox="0 0 13 13"><circle cx="6.500" cy="6.500" r="5.200" fill="none" stroke="#a2a2a2" stroke-width="1"/><path d="M6.500 6.500V2.500" stroke="#a2a2a2" stroke-width="1"/></svg>
<div class="t b" style="left:580px;top:154.500px;font-size:7px">+0 <span style="color:#8a8a8a">dB</span></div>
<div class="a" style="left:610.500px;top:153px;width:1px;height:13px;background:#5a5f4a"></div>
<div class="a" style="left:548px;top:153px;width:2px;height:13px;background:#585858"></div>
<div class="a" style="left:613.500px;top:154.500px;width:8.500px;height:9.500px;background:#14182a"></div>
<svg style="left:614.500px;top:156px" width="6.500" height="6.500" viewBox="0 0 7 7"><path d="M4 0l3 3-1.500 .5L4 5 2 3l1.500-1.500zM2.500 4.500L0 7" fill="#a9c6f2" stroke="#a9c6f2" stroke-width=".8"/></svg>
<div class="t b" style="left:280px;top:633.500px;font-size:10px;line-height:12px;height:12px;letter-spacing:0">0:00.000</div>

<svg style="left:517px;top:634.3px" width="6" height="6"><rect width="6" height="6" fill="#505050"/></svg>
<svg style="left:536px;top:633.3px" width="7" height="8" viewBox="0 0 7 8"><path d="M0 0l7 4-7 4z" fill="#e6e6e6"/></svg>
<svg style="left:556px;top:634.3px" width="5" height="6" viewBox="0 0 5 6"><path d="M1 0v6M4 0v6" stroke="#484848" stroke-width="1.400"/></svg>
<svg style="left:573px;top:634.3px" width="8" height="6" viewBox="0 0 8 6"><path d="M.7 0v6" stroke="#dcdcdc" stroke-width="1.400"/><path d="M8 0v6L2.500 3z" fill="#dcdcdc"/></svg>
<svg style="left:592px;top:634.8px" width="9" height="5" viewBox="0 0 9 5"><path d="M4.500 0v5L0 2.500zM9 0v5L4.500 2.500z" fill="#dcdcdc"/></svg>
<svg style="left:610px;top:634.8px" width="9" height="5" viewBox="0 0 9 5"><path d="M0 0v5l4.500-2.500zM4.500 0v5L9 2.500z" fill="#dcdcdc"/></svg>
<svg style="left:629px;top:634.3px" width="8" height="6" viewBox="0 0 8 6"><path d="M7.300 0v6" stroke="#dcdcdc" stroke-width="1.400"/><path d="M0 0v6l5.500-3z" fill="#dcdcdc"/></svg>
<svg style="left:648.500px;top:633.8px" width="7" height="7" viewBox="0 0 7 7"><circle cx="3.500" cy="3.500" r="3.300" fill="#e0464c"/></svg>
<div class="a" style="left:664.500px;top:631.800px;width:13px;height:11.500px;background:#172650;border-radius:2px"></div>
<svg style="left:666px;top:632.3px" width="11" height="10" viewBox="0 0 11 10"><path d="M.8 4v5h9V4" stroke="#4d8df0" stroke-width="1.400" fill="none"/><path d="M2.500 6.500V4.500Q2.500 3 4.500 3h3" stroke="#4d8df0" stroke-width="1.200" fill="none"/><path d="M6.500 .8L9 3 6.500 5.200z" fill="#4d8df0"/></svg>
<svg style="left:684px;top:633.3px" width="12" height="8" viewBox="0 0 12 8"><circle cx="5" cy="4" r="2.400" fill="none" stroke="#dcdcdc" stroke-width="1.100"/><path d="M0 4h2.500M7.500 4H10M9 2l2.500 2L9 6z" stroke="#dcdcdc" stroke-width="1" fill="#dcdcdc"/></svg>
<svg style="left:858px;top:633px" width="12" height="11" viewBox="0 0 12 11"><circle cx="6.500" cy="5" r="2.700" fill="none" stroke="#d6d6d6" stroke-width="1.100"/><path d="M8.500 7l2.500 3" stroke="#d6d6d6" stroke-width="1.300"/><path d="M1.500 .5v10M0 .5h3M0 10.500h3" stroke="#d6d6d6" stroke-width="1"/><path d="M5.200 5h2.600M6.500 3.700v2.600" stroke="#d6d6d6" stroke-width=".8"/></svg>
<svg style="left:877px;top:633px" width="12" height="11" viewBox="0 0 12 11"><circle cx="6.500" cy="5" r="2.700" fill="none" stroke="#d6d6d6" stroke-width="1.100"/><path d="M8.500 7l2.500 3" stroke="#d6d6d6" stroke-width="1.300"/><path d="M1.500 .5v10M0 .5h3M0 10.500h3" stroke="#d6d6d6" stroke-width="1"/><path d="M5.200 5h2.600M6.500 3.700v2.600" stroke="#d6d6d6" stroke-width=".8"/></svg>
<svg style="left:896px;top:633px" width="12" height="11" viewBox="0 0 12 11"><circle cx="6.500" cy="5" r="2.700" fill="none" stroke="#d6d6d6" stroke-width="1.100"/><path d="M8.500 7l2.500 3" stroke="#d6d6d6" stroke-width="1.300"/><path d="M1 .8h10M1 0v2M11 0v2" stroke="#d6d6d6" stroke-width="1"/></svg>
<svg style="left:915px;top:633px" width="12" height="11" viewBox="0 0 12 11"><circle cx="6.500" cy="5" r="2.700" fill="none" stroke="#414141" stroke-width="1.100"/><path d="M8.500 7l2.500 3" stroke="#414141" stroke-width="1.300"/><path d="M1 .8h10M1 0v2M11 0v2" stroke="#414141" stroke-width="1"/></svg>
<svg style="left:933px;top:633px" width="12" height="11" viewBox="0 0 12 11"><path d="M6 0l1.500 4 4 .3-3 2.500 1 4L6 8.500 2.500 10.800l1-4-3-2.500 4-.3z" fill="none" stroke="#414141" stroke-width="1"/></svg>
<svg style="left:953px;top:633px" width="12" height="11" viewBox="0 0 12 11"><circle cx="6.500" cy="5" r="2.700" fill="none" stroke="#d6d6d6" stroke-width="1.100"/><path d="M8.500 7l2.500 3" stroke="#d6d6d6" stroke-width="1.300"/><path d="M2 2.500Q.5 5 2 7.500" stroke="#d6d6d6" stroke-width="1" fill="none"/></svg>
<svg style="left:973px;top:633px" width="12" height="11" viewBox="0 0 12 11"><circle cx="6.500" cy="5" r="2.700" fill="none" stroke="#d6d6d6" stroke-width="1.100"/><path d="M8.500 7l2.500 3" stroke="#d6d6d6" stroke-width="1.300"/><path d="M1 2.500Q2.500 5 1 7.500" stroke="#d6d6d6" stroke-width="1" fill="none"/></svg>
<svg style="left:991px;top:633px" width="12" height="11" viewBox="0 0 12 11"><circle cx="6.500" cy="5" r="2.700" fill="none" stroke="#414141" stroke-width="1.100"/><path d="M8.500 7l2.500 3" stroke="#414141" stroke-width="1.300"/><path d="M2 2.500Q.5 5 2 7.500" stroke="#414141" stroke-width="1" fill="none"/></svg>
<svg style="left:1008px;top:632px" width="12" height="12" viewBox="0 0 12 12"><circle cx="6" cy="7" r="3.800" fill="none" stroke="#d6d6d6" stroke-width="1.300"/><path d="M4 .5v4h4" fill="none" stroke="#d6d6d6" stroke-width="1.200"/><path d="M6 5v4" stroke="#d6d6d6" stroke-width="1"/></svg>
<svg style="left:1027px;top:633px" width="12" height="11" viewBox="0 0 12 11"><circle cx="6.500" cy="5" r="2.700" fill="none" stroke="#414141" stroke-width="1.100"/><path d="M8.500 7l2.500 3" stroke="#414141" stroke-width="1.300"/><path d="M1.500 .5v10M0 .5h3M0 10.500h3" stroke="#414141" stroke-width="1"/><path d="M5.200 5h2.600M6.500 3.700v2.600" stroke="#414141" stroke-width=".8"/></svg>

<div class="a" id="menu" style="left:234px;top:0;width:172px;height:341px;border-radius:0 0 6px 6px;background:linear-gradient(90deg,rgba(56,56,56,.62) 0,rgba(56,56,56,.5) 17%,rgba(56,56,56,0) 37%),linear-gradient(180deg,#3e3e3e 0,#434343 11%,#585858 24%,#696969 38%,#6c6c6c 100%);box-shadow:0 4px 10px rgba(0,0,0,.35)"></div>
<div class="a" style="left:238px;top:138px;width:164px;height:14px;background:rgba(255,255,255,.1);border-radius:3px"></div>
<div class="mi" style="top:-5px">Show Effects Rack</div>
<div class="mi dis" style="top:9px">Edit Clip Effects in Effects Rack</div>
<div class="mi dis" style="top:22px">Edit Track Effects in Effects Rack</div>
<div class="mi" style="top:42.5px">Invert</div>
<div class="mi" style="top:56.3px">Reverse</div>
<div class="mi" style="top:70px">Silence</div>
<div class="mi" style="top:83.8px">Generate</div><svg style="left:392px;top:85.8px" width="5" height="8" viewBox="0 0 5 8"><path d="M1 1l3 3-3 3" fill="none" stroke="#f4f4f4" stroke-width="1.300"/></svg>
<div class="mi" style="top:104.3px">Match Loudness</div>
<div class="mi" style="top:118px">Auto Heal Selection</div>
<div class="mi" style="top:139px">Amplitude and Compression</div><svg style="left:392px;top:141px" width="5" height="8" viewBox="0 0 5 8"><path d="M1 1l3 3-3 3" fill="none" stroke="#f4f4f4" stroke-width="1.300"/></svg>
<div class="mi" style="top:152.7px">Delay and Echo</div><svg style="left:392px;top:154.7px" width="5" height="8" viewBox="0 0 5 8"><path d="M1 1l3 3-3 3" fill="none" stroke="#f4f4f4" stroke-width="1.300"/></svg>
<div class="mi" style="top:166.5px">Diagnostics</div><svg style="left:392px;top:168.5px" width="5" height="8" viewBox="0 0 5 8"><path d="M1 1l3 3-3 3" fill="none" stroke="#f4f4f4" stroke-width="1.300"/></svg>
<div class="mi" style="top:180.2px">Filter and EQ</div><svg style="left:392px;top:182.2px" width="5" height="8" viewBox="0 0 5 8"><path d="M1 1l3 3-3 3" fill="none" stroke="#f4f4f4" stroke-width="1.300"/></svg>
<div class="mi" style="top:194px">Modulation</div><svg style="left:392px;top:196px" width="5" height="8" viewBox="0 0 5 8"><path d="M1 1l3 3-3 3" fill="none" stroke="#f4f4f4" stroke-width="1.300"/></svg>
<div class="mi" style="top:207.7px">Noise Reduction / Restoration</div><svg style="left:392px;top:209.7px" width="5" height="8" viewBox="0 0 5 8"><path d="M1 1l3 3-3 3" fill="none" stroke="#f4f4f4" stroke-width="1.300"/></svg>
<div class="mi" style="top:221.5px">Reverb</div><svg style="left:392px;top:223.5px" width="5" height="8" viewBox="0 0 5 8"><path d="M1 1l3 3-3 3" fill="none" stroke="#f4f4f4" stroke-width="1.300"/></svg>
<div class="mi" style="top:235.2px">Special</div><svg style="left:392px;top:237.2px" width="5" height="8" viewBox="0 0 5 8"><path d="M1 1l3 3-3 3" fill="none" stroke="#f4f4f4" stroke-width="1.300"/></svg>
<div class="mi" style="top:249px">Stereo Imagery</div><svg style="left:392px;top:251px" width="5" height="8" viewBox="0 0 5 8"><path d="M1 1l3 3-3 3" fill="none" stroke="#f4f4f4" stroke-width="1.300"/></svg>
<div class="mi" style="top:262.7px">Time and Pitch</div><svg style="left:392px;top:264.7px" width="5" height="8" viewBox="0 0 5 8"><path d="M1 1l3 3-3 3" fill="none" stroke="#f4f4f4" stroke-width="1.300"/></svg>
<div class="mi" style="top:283.3px">VST</div><svg style="left:392px;top:285.3px" width="5" height="8" viewBox="0 0 5 8"><path d="M1 1l3 3-3 3" fill="none" stroke="#f4f4f4" stroke-width="1.300"/></svg>
<div class="mi" style="top:297px">VST 3</div><svg style="left:392px;top:299px" width="5" height="8" viewBox="0 0 5 8"><path d="M1 1l3 3-3 3" fill="none" stroke="#f4f4f4" stroke-width="1.300"/></svg>
<div class="mi" style="top:310.8px">AU</div><svg style="left:392px;top:312.8px" width="5" height="8" viewBox="0 0 5 8"><path d="M1 1l3 3-3 3" fill="none" stroke="#f4f4f4" stroke-width="1.300"/></svg>
<div class="mi" style="top:324.5px">Audio Plug-In Manager...</div>
<div class="mi" style="left:384px;top:118px;color:#a8a8a8">⌘U</div>
<div class="mi" style="left:384px;top:-5px;color:#a8a8a8">⌥0</div>
<div class="sep" style="top:39px"></div><div class="sep" style="top:100px"></div><div class="sep" style="top:134px"></div><div class="sep" style="top:279px"></div>
<div class="a" id="submenu" style="left:405px;top:135px;width:126px;height:186px;background:#6e6e6e;border-radius:5px;box-shadow:0 3px 9px rgba(0,0,0,.3);border:1px solid #7c7c7c"></div>
<div class="a" style="left:406px;top:262px;width:124px;height:14px;background:#4d8fe2"></div>
<div class="si" style="top:139.0px">Amplify...</div>
<div class="si" style="top:152.8px">Channel Mixer...</div>
<div class="si" style="top:166.5px">DeEsser...</div>
<div class="si" style="top:180.2px">Dynamics...</div>
<div class="si" style="top:194.0px">Dynamics Processing...</div>
<div class="si" style="top:207.8px">Fade Envelope (process)...</div>
<div class="si" style="top:221.5px">Gain Envelope (process)...</div>
<div class="si" style="top:235.2px">Hard Limiter...</div>
<div class="si" style="top:249.0px">Multiband Compressor...</div>
<div class="si" style="top:262.8px">Normalize (process)...</div>
<div class="si" style="top:276.5px">Single-band Compressor...</div>
<div class="si" style="top:290.2px">Speech Volume Leveler...</div>
<div class="si" style="top:304.0px">Tube-modeled Compressor...</div>
</body></html>
